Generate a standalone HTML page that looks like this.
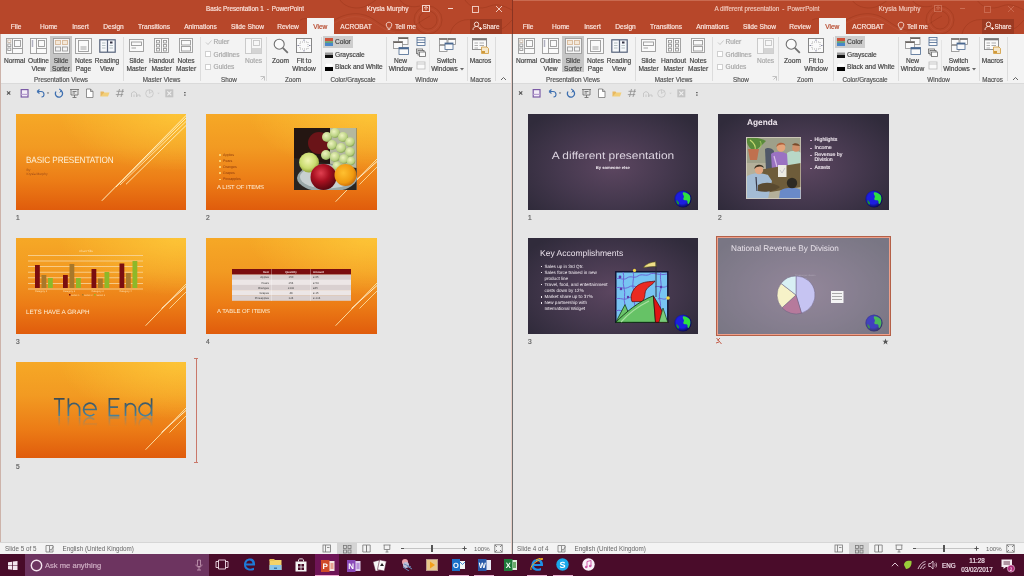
<!DOCTYPE html>
<html><head><meta charset="utf-8"><style>
html,body{margin:0;padding:0}
body{width:1024px;height:576px;position:relative;overflow:hidden;font-family:"Liberation Sans",sans-serif;background:#e6e6e6}
.a{position:absolute}
svg text{text-rendering:geometricPrecision}
.s .t{text-rendering:geometricPrecision}
.s .t{-webkit-text-stroke:0}
.t{position:absolute;white-space:nowrap;line-height:1.2;font-family:"Liberation Sans",sans-serif;-webkit-text-stroke:0.18px currentColor}
.win{position:absolute;top:0;width:512px;height:554px;overflow:hidden;will-change:transform}
</style></head><body>
<div class="win" style="left:0"><div class="a" style="left:0px;top:0px;width:512px;height:34px;background:#b7472a"></div><svg class="a" style="left:300px;top:0px;" width="212" height="34" viewBox="0 0 212 34"><g fill="none" stroke="rgba(140,45,20,0.35)" stroke-width="0.9"><path d="M20 34 C30 20 45 12 60 14 C75 16 80 28 95 30 C110 32 118 22 130 16"/><path d="M40 0 C45 8 58 10 66 6 C72 3 76 0 78 -2"/><circle cx="128" cy="20" r="9"/><circle cx="128" cy="20" r="14"/><path d="M150 34 C152 24 162 18 172 20 C182 22 186 30 196 30 C204 30 208 24 212 20"/><path d="M100 0 C104 6 112 8 120 6"/><path d="M165 0 C170 8 180 10 190 6 C198 3 204 6 212 10"/><path d="M0 20 C8 16 14 22 22 20"/></g><g fill="none" stroke="rgba(255,200,180,0.08)" stroke-width="0.8"><circle cx="128" cy="20" r="11.5"/><path d="M22 34 C32 22 46 15 60 17 C74 19 80 30 95 33"/></g></svg><div class="t" style="left:155px;width:200px;text-align:center;top:4.72px;font-size:6.3px;color:#fbe3dc;font-weight:normal;">Basic Presentation 1 &thinsp;-&thinsp; PowerPoint</div><div class="t" style="left:287.5px;width:200px;text-align:center;top:5.04px;font-size:6.6px;color:#fbe3dc;font-weight:normal;">Krysia Murphy</div><svg class="a" style="left:421px;top:4px;" width="10" height="9" viewBox="0 0 10 9"><rect x="1.5" y="1.5" width="7" height="6" fill="none" stroke="#f5d5cc" stroke-width="1"/><path d="M3 4 L5 2.5 L7 4 M5 3 V6" stroke="#f5d5cc" fill="none" stroke-width="0.9"/></svg><div class="a" style="left:448px;top:8px;width:5px;height:1px;background:#f5d5cc"></div><svg class="a" style="left:471px;top:5px;" width="8" height="8" viewBox="0 0 8 8"><rect x="1.5" y="1.5" width="6" height="6" fill="none" stroke="#f5d5cc" stroke-width="0.9"/></svg><svg class="a" style="left:495px;top:5px;" width="8" height="8" viewBox="0 0 8 8"><path d="M1 1 L7 7 M7 1 L1 7" stroke="#f5d5cc" stroke-width="0.9"/></svg><div class="t" style="left:-84px;width:200px;text-align:center;top:22.84px;font-size:6.6px;color:#fbe6df;font-weight:normal;">File</div><div class="t" style="left:-51.25px;width:200px;text-align:center;top:22.84px;font-size:6.6px;color:#fbe6df;font-weight:normal;">Home</div><div class="t" style="left:-19.5px;width:200px;text-align:center;top:22.84px;font-size:6.6px;color:#fbe6df;font-weight:normal;">Insert</div><div class="t" style="left:13.5px;width:200px;text-align:center;top:22.84px;font-size:6.6px;color:#fbe6df;font-weight:normal;">Design</div><div class="t" style="left:54px;width:200px;text-align:center;top:22.84px;font-size:6.6px;color:#fbe6df;font-weight:normal;">Transitions</div><div class="t" style="left:100.5px;width:200px;text-align:center;top:22.84px;font-size:6.6px;color:#fbe6df;font-weight:normal;">Animations</div><div class="t" style="left:147.5px;width:200px;text-align:center;top:22.84px;font-size:6.6px;color:#fbe6df;font-weight:normal;">Slide Show</div><div class="t" style="left:188px;width:200px;text-align:center;top:22.84px;font-size:6.6px;color:#fbe6df;font-weight:normal;">Review</div><div class="t" style="left:256px;width:200px;text-align:center;top:22.84px;font-size:6.6px;color:#fbe6df;font-weight:normal;">ACROBAT</div><div class="a" style="left:306.5px;top:18px;width:27.5px;height:16px;background:#f3f3f3"></div><div class="t" style="left:220.25px;width:200px;text-align:center;top:22.84px;font-size:6.6px;color:#b7472a;font-weight:normal;">View</div><svg class="a" style="left:385px;top:21px;" width="8" height="10" viewBox="0 0 8 10"><path d="M4 1.2 C2 1.2 1.2 2.6 1.2 4 C1.2 5.3 2.4 6 2.6 7.2 H5.4 C5.6 6 6.8 5.3 6.8 4 C6.8 2.6 6 1.2 4 1.2 Z M2.8 8.4 H5.2" fill="none" stroke="#fbe6df" stroke-width="0.8"/></svg><div class="t" style="left:395px;top:22.84px;font-size:6.6px;color:#fbe6df;font-weight:normal;">Tell me</div><div class="a" style="left:470px;top:18.5px;width:32px;height:15px;background:#9c3a22"></div><svg class="a" style="left:472px;top:21px;" width="10" height="10" viewBox="0 0 10 10"><circle cx="4.5" cy="3.3" r="2.2" fill="none" stroke="#fbe6df" stroke-width="0.9"/><path d="M1 9 C1 6.5 2.5 5.5 4.5 5.5 C6 5.5 7 6 7.5 7 M7 7.5 H10 M8.5 6 V9" fill="none" stroke="#fbe6df" stroke-width="0.9"/></svg><div class="t" style="left:482.5px;top:22.66px;font-size:6.4px;color:#fbe6df;font-weight:normal;">Share</div><div class="a" style="left:0px;top:34px;width:512px;height:49px;background:#f3f3f3"></div><div class="a" style="left:0px;top:83px;width:512px;height:1px;background:#dadada"></div><div class="a" style="left:0px;top:84px;width:512px;height:458px;background:#e6e6e6"></div><div class="a" style="left:428.5px;top:40px;width:1px;height:32px;background:#e4e4e4"></div><div class="a" style="left:122.5px;top:37px;width:1px;height:44px;background:#dcdcdc"></div><div class="a" style="left:200px;top:37px;width:1px;height:44px;background:#dcdcdc"></div><div class="a" style="left:266px;top:37px;width:1px;height:44px;background:#dcdcdc"></div><div class="a" style="left:320.5px;top:37px;width:1px;height:44px;background:#dcdcdc"></div><div class="a" style="left:385.5px;top:37px;width:1px;height:44px;background:#dcdcdc"></div><div class="a" style="left:466.5px;top:37px;width:1px;height:44px;background:#dcdcdc"></div><div class="a" style="left:494.5px;top:37px;width:1px;height:44px;background:#dcdcdc"></div><div class="a" style="left:50px;top:36px;width:22px;height:36px;background:#c6c6c6"></div><svg class="a" style="left:6px;top:38px;" width="17" height="16" viewBox="0 0 17 16"><g fill="none" stroke="#9a9a9a" stroke-width="0.9"><rect x="0.5" y="0.5" width="16" height="15" fill="#fafafa"/><path d="M6.5 0.5 V15.5 M6.5 10.5 H16.5"/><rect x="8.5" y="2.5" width="6" height="6"/><rect x="1.8" y="2" width="3" height="2.5" stroke="#c8b8a8"/><rect x="1.8" y="6" width="3" height="2.5"/><rect x="1.8" y="10" width="3" height="2.5"/></g></svg><div class="t" style="left:-85.5px;width:200px;text-align:center;top:56.54px;font-size:6.6px;color:#444;font-weight:normal;">Normal</div><svg class="a" style="left:30px;top:38px;" width="17" height="16" viewBox="0 0 17 16"><g fill="none" stroke="#9a9a9a" stroke-width="0.9"><rect x="0.5" y="0.5" width="16" height="15" fill="#fafafa"/><path d="M6.5 0.5 V15.5 M6.5 10.5 H16.5"/><rect x="8.5" y="2.5" width="6" height="6"/><path d="M2.5 2 V9" stroke="#b0b0c0" stroke-width="1.5"/></g></svg><div class="t" style="left:-61.5px;width:200px;text-align:center;top:56.54px;font-size:6.6px;color:#444;font-weight:normal;">Outline</div><div class="t" style="left:-61.5px;width:200px;text-align:center;top:65.24px;font-size:6.6px;color:#444;font-weight:normal;">View</div><svg class="a" style="left:52.5px;top:38px;" width="17" height="16" viewBox="0 0 17 16"><g fill="none" stroke="#9a9a9a" stroke-width="0.9"><rect x="0.5" y="0.5" width="16" height="15" fill="#f4f4f4"/><rect x="2.5" y="2.5" width="5" height="4" stroke="#d8b898" fill="#f4e8d8"/><rect x="9.5" y="2.5" width="5" height="4" stroke="#d8b898" fill="#f4e8d8"/><rect x="2.5" y="9" width="5" height="4"/><rect x="9.5" y="9" width="5" height="4"/></g></svg><div class="t" style="left:-39px;width:200px;text-align:center;top:56.54px;font-size:6.6px;color:#444;font-weight:normal;">Slide</div><div class="t" style="left:-39px;width:200px;text-align:center;top:65.24px;font-size:6.6px;color:#444;font-weight:normal;">Sorter</div><svg class="a" style="left:75px;top:38px;" width="17" height="16" viewBox="0 0 17 16"><g fill="none" stroke="#9a9a9a" stroke-width="0.9"><rect x="0.5" y="0.5" width="16" height="15" fill="#fafafa"/><rect x="3.5" y="2.5" width="10" height="11"/><path d="M5.5 9 H11.5 M5.5 11 H11.5"/></g></svg><div class="t" style="left:-16.5px;width:200px;text-align:center;top:56.54px;font-size:6.6px;color:#444;font-weight:normal;">Notes</div><div class="t" style="left:-16.5px;width:200px;text-align:center;top:65.24px;font-size:6.6px;color:#444;font-weight:normal;">Page</div><svg class="a" style="left:98.5px;top:39px;" width="17" height="14" viewBox="0 0 17 14"><g fill="none" stroke="#55627a" stroke-width="1.2"><rect x="0.8" y="0.8" width="15.4" height="12.4" fill="#f6f8fb"/><path d="M8.5 1 V13"/><path d="M3 4 H6.5 M3 6.5 H6.5 M3 9 H6.5 M10.5 6.5 H14 M10.5 9 H14" stroke="#9aa" stroke-width="0.7"/><rect x="11" y="2.5" width="2.5" height="2" fill="#334" stroke="none"/></g></svg><div class="t" style="left:7px;width:200px;text-align:center;top:56.54px;font-size:6.6px;color:#444;font-weight:normal;">Reading</div><div class="t" style="left:7px;width:200px;text-align:center;top:65.24px;font-size:6.6px;color:#444;font-weight:normal;">View</div><div class="t" style="left:-39px;width:200px;text-align:center;top:75.72px;font-size:6.3px;color:#555;font-weight:normal;">Presentation Views</div><svg class="a" style="left:129px;top:39px;" width="15" height="13" viewBox="0 0 15 13"><g fill="none" stroke="#9a9a9a" stroke-width="0.9"><rect x="0.5" y="0.5" width="14" height="12" fill="#fafafa"/><rect x="2.5" y="3" width="10" height="3.5"/><path d="M2.5 9 H7"/></g></svg><div class="t" style="left:36.5px;width:200px;text-align:center;top:56.54px;font-size:6.6px;color:#444;font-weight:normal;">Slide</div><div class="t" style="left:36.5px;width:200px;text-align:center;top:65.24px;font-size:6.6px;color:#444;font-weight:normal;">Master</div><svg class="a" style="left:154px;top:38px;" width="15" height="15" viewBox="0 0 15 15"><g fill="none" stroke="#9a9a9a" stroke-width="0.9"><rect x="0.5" y="0.5" width="14" height="14" fill="#fafafa"/><path d="M7.5 0.5 V14.5"/><rect x="2.5" y="2.5" width="3" height="2.5"/><rect x="2.5" y="6.5" width="3" height="2.5"/><rect x="2.5" y="10.5" width="3" height="2.5"/><rect x="9.5" y="2.5" width="3" height="2.5"/><rect x="9.5" y="6.5" width="3" height="2.5"/><rect x="9.5" y="10.5" width="3" height="2.5"/></g></svg><div class="t" style="left:61.5px;width:200px;text-align:center;top:56.54px;font-size:6.6px;color:#444;font-weight:normal;">Handout</div><div class="t" style="left:61.5px;width:200px;text-align:center;top:65.24px;font-size:6.6px;color:#444;font-weight:normal;">Master</div><svg class="a" style="left:179px;top:38px;" width="14" height="15" viewBox="0 0 14 15"><g fill="none" stroke="#9a9a9a" stroke-width="0.9"><rect x="0.5" y="0.5" width="13" height="14" fill="#fafafa"/><rect x="2.5" y="2.5" width="9" height="4.5"/><rect x="2.5" y="8.5" width="9" height="4.5"/></g></svg><div class="t" style="left:86px;width:200px;text-align:center;top:56.54px;font-size:6.6px;color:#444;font-weight:normal;">Notes</div><div class="t" style="left:86px;width:200px;text-align:center;top:65.24px;font-size:6.6px;color:#444;font-weight:normal;">Master</div><div class="t" style="left:61.5px;width:200px;text-align:center;top:75.72px;font-size:6.3px;color:#555;font-weight:normal;">Master Views</div><svg class="a" style="left:205px;top:39px;" width="7" height="7" viewBox="0 0 7 7"><path d="M1 3.5 L3 5.5 L6.5 1.5" fill="none" stroke="#c4c4c4" stroke-width="0.9"/></svg><div class="t" style="left:213.5px;top:38.34px;font-size:6.6px;color:#a8a8a8;font-weight:normal;">Ruler</div><div class="a" style="left:205px;top:51px;width:6px;height:6px;background:#fff;border:0.5px solid #d0d0d0;box-sizing:border-box"></div><div class="t" style="left:213.5px;top:50.54px;font-size:6.6px;color:#a8a8a8;font-weight:normal;">Gridlines</div><div class="a" style="left:205px;top:63.5px;width:6px;height:6px;background:#fff;border:0.5px solid #d0d0d0;box-sizing:border-box"></div><div class="t" style="left:213.5px;top:63.04px;font-size:6.6px;color:#a8a8a8;font-weight:normal;">Guides</div><svg class="a" style="left:245px;top:38px;" width="17" height="16" viewBox="0 0 17 16"><g fill="none" stroke="#c6c6c6" stroke-width="0.9"><rect x="0.5" y="0.5" width="16" height="15" fill="#f7f7f7"/><path d="M6.5 0.5 V15.5"/><rect x="8.5" y="2.5" width="6" height="5"/><rect x="7" y="10" width="9.5" height="5.5" fill="#d4d4d4" stroke="none"/></g></svg><div class="t" style="left:153.5px;width:200px;text-align:center;top:56.54px;font-size:6.6px;color:#a8a8a8;font-weight:normal;">Notes</div><div class="t" style="left:129px;width:200px;text-align:center;top:75.72px;font-size:6.3px;color:#555;font-weight:normal;">Show</div><svg class="a" style="left:260px;top:76px;" width="5" height="5" viewBox="0 0 5 5"><path d="M0.5 0.5 H4.5 V4.5 M1.5 3.5 L4 1" fill="none" stroke="#aaa" stroke-width="0.7"/></svg><svg class="a" style="left:272.5px;top:38px;" width="16" height="16" viewBox="0 0 16 16"><circle cx="6.2" cy="6.2" r="5" fill="#fafafa" stroke="#707070" stroke-width="1.1"/><path d="M9.8 9.8 L14.8 14.8" stroke="#707070" stroke-width="1.8"/></svg><div class="t" style="left:180.5px;width:200px;text-align:center;top:56.54px;font-size:6.6px;color:#444;font-weight:normal;">Zoom</div><svg class="a" style="left:296px;top:38px;" width="16" height="15" viewBox="0 0 16 15"><g fill="none" stroke="#7a7a7a" stroke-width="0.9"><rect x="0.5" y="0.5" width="15" height="14" fill="#fafafa"/><rect x="4" y="4" width="8" height="7" stroke="#aaa" stroke-dasharray="1 1"/><path d="M8 1.5 V3 M8 12 V13.5 M1.5 7.5 H3 M13 7.5 H14.5" stroke="#7a7a9a"/></g></svg><div class="t" style="left:204px;width:200px;text-align:center;top:56.54px;font-size:6.6px;color:#444;font-weight:normal;">Fit to</div><div class="t" style="left:204px;width:200px;text-align:center;top:65.24px;font-size:6.6px;color:#444;font-weight:normal;">Window</div><div class="t" style="left:193px;width:200px;text-align:center;top:75.72px;font-size:6.3px;color:#555;font-weight:normal;">Zoom</div><div class="a" style="left:323px;top:36px;width:30px;height:11.5px;background:#cdcdcd"></div><svg class="a" style="left:325px;top:37.5px;" width="8" height="8" viewBox="0 0 8 8"><rect x="0" y="0" width="8" height="3.3" fill="#d0523a"/><rect x="0" y="3.3" width="8" height="1.6" fill="#5aa36a"/><rect x="0" y="4.9" width="8" height="3.1" fill="#4a86c8"/></svg><div class="t" style="left:335px;top:37.54px;font-size:6.6px;color:#444;font-weight:normal;">Color</div><svg class="a" style="left:325px;top:50px;" width="8" height="8" viewBox="0 0 8 8"><rect x="0" y="0" width="8" height="2.5" fill="#f0f0f0"/><rect x="0" y="2.5" width="8" height="2.5" fill="#999"/><rect x="0" y="5" width="8" height="3" fill="#111"/></svg><div class="t" style="left:335px;top:50.54px;font-size:6.6px;color:#444;font-weight:normal;">Grayscale</div><svg class="a" style="left:325px;top:63px;" width="8" height="8" viewBox="0 0 8 8"><rect x="0" y="0" width="8" height="4" fill="#fff" stroke="#ddd" stroke-width="0.5"/><rect x="0" y="4" width="8" height="4" fill="#000"/></svg><div class="t" style="left:335px;top:63.04px;font-size:6.6px;color:#444;font-weight:normal;">Black and White</div><div class="t" style="left:253px;width:200px;text-align:center;top:75.72px;font-size:6.3px;color:#555;font-weight:normal;">Color/Grayscale</div><svg class="a" style="left:393px;top:37px;" width="16" height="18" viewBox="0 0 16 18"><g stroke-width="0.8"><rect x="5.5" y="0.5" width="9.5" height="7" fill="#fafafa" stroke="#8a8a8a"/><rect x="5.5" y="0.5" width="9.5" height="1.5" fill="#6a6460"/><rect x="0.5" y="4.5" width="9" height="7" fill="#fafafa" stroke="#8a8a8a"/><rect x="0.5" y="4.5" width="9" height="1.5" fill="#6a6460"/><rect x="6" y="10.5" width="9.5" height="7" fill="#fafafa" stroke="#4a6890"/><rect x="6" y="10.5" width="9.5" height="1.8" fill="#4a6890"/></g></svg><div class="t" style="left:300.5px;width:200px;text-align:center;top:56.54px;font-size:6.6px;color:#444;font-weight:normal;">New</div><div class="t" style="left:300.5px;width:200px;text-align:center;top:65.24px;font-size:6.6px;color:#444;font-weight:normal;">Window</div><svg class="a" style="left:415.5px;top:37px;" width="10" height="34" viewBox="0 0 10 34"><g stroke-width="0.8" fill="#fafafa"><rect x="1" y="0.5" width="8" height="8" stroke="#4a6890"/><path d="M1 3 H9 M1 5.5 H9" stroke="#4a6890"/><rect x="0.5" y="12" width="6" height="4.5" stroke="#666"/><rect x="2" y="13.5" width="6" height="4.5" stroke="#666"/><rect x="3.5" y="15" width="6" height="4.5" stroke="#666"/><rect x="1" y="25" width="8" height="7" stroke="#bbb"/><path d="M1 27 H9" stroke="#bbb"/></g></svg><svg class="a" style="left:438.5px;top:38px;" width="17" height="14" viewBox="0 0 17 14"><g stroke-width="0.8"><rect x="0.5" y="0.5" width="7.5" height="6" fill="#fafafa" stroke="#8a8a8a"/><rect x="0.5" y="0.5" width="7.5" height="1.3" fill="#6a6460"/><rect x="9" y="0.5" width="7.5" height="6" fill="#fafafa" stroke="#8a8a8a"/><rect x="9" y="0.5" width="7.5" height="1.3" fill="#6a6460"/><rect x="0.5" y="7.5" width="7.5" height="6" fill="#fafafa" stroke="#8a8a8a"/><rect x="6" y="5" width="8" height="6.5" fill="#fafafa" stroke="#4a6890"/><rect x="6" y="5" width="8" height="1.5" fill="#4a6890"/></g></svg><div class="t" style="left:346.5px;width:200px;text-align:center;top:56.54px;font-size:6.6px;color:#444;font-weight:normal;">Switch</div><div class="t" style="left:344.5px;width:200px;text-align:center;top:65.24px;font-size:6.6px;color:#444;font-weight:normal;">Windows</div><svg class="a" style="left:459.5px;top:68px;" width="4" height="3" viewBox="0 0 4 3"><path d="M0 0 H4 L2 2.5 Z" fill="#666"/></svg><div class="t" style="left:326.5px;width:200px;text-align:center;top:75.72px;font-size:6.3px;color:#555;font-weight:normal;">Window</div><svg class="a" style="left:472px;top:38px;" width="18" height="16" viewBox="0 0 18 16"><g stroke-width="0.8"><rect x="0.5" y="0.5" width="14" height="11" fill="#fafafa" stroke="#777"/><rect x="0.5" y="0.5" width="14" height="1.8" fill="#777"/><path d="M2.5 5 H6 M7.5 5 H12 M2.5 7.5 H6 M7.5 7.5 H12 M2.5 10 H6" stroke="#999"/><path d="M9.5 9 H15 L16.5 10.5 V15.5 H9.5 Z" fill="#f5e6c8" stroke="#d09a3a"/><rect x="10" y="13" width="3" height="2" fill="#d09a3a"/></g></svg><div class="t" style="left:380.5px;width:200px;text-align:center;top:56.54px;font-size:6.6px;color:#444;font-weight:normal;">Macros</div><div class="t" style="left:380.5px;width:200px;text-align:center;top:75.72px;font-size:6.3px;color:#555;font-weight:normal;">Macros</div><svg class="a" style="left:500px;top:76px;" width="7" height="5" viewBox="0 0 7 5"><path d="M1 4 L3.5 1.5 L6 4" fill="none" stroke="#555" stroke-width="0.9"/></svg><svg class="a" style="left:0px;top:0px;pointer-events:none" width="512" height="110" viewBox="0 0 512 110"><path d="M7 91.3 L10.3 94.6 M10.3 91.3 L7 94.6" stroke="#555" stroke-width="1.1"/><rect x="21.2" y="89.6" width="6.8" height="7.4" fill="#f4eef8" stroke="#7b5aa6" stroke-width="1.2"/><rect x="21.2" y="93.8" width="6.8" height="1.2" fill="#b8a0d0"/><path d="M37 91.5 L39.5 89.5 M37 91.5 L39.5 93.5 M37.3 91.5 H41 C43 91.5 44 93 44 94.5 C44 96 43 97 41.5 97" fill="none" stroke="#3d6fb0" stroke-width="1.1"/><path d="M46.8 92.6 L49.2 92.6 L48 94.1 Z" fill="#666"/><path d="M60.5 90.3 A3.6 3.6 0 1 1 56 91.5" fill="none" stroke="#3d6fb0" stroke-width="1.3"/><path d="M59 89 L61.5 90.3 L59.8 92.5" fill="none" stroke="#3d6fb0" stroke-width="1"/><path d="M70 89.5 H79 M71 89.5 V95 H78 V89.5 M74.5 95 V97.5 M72.5 97.5 H76.5 M72.5 91.5 H76.5 M72.5 93 H75" fill="none" stroke="#666" stroke-width="0.8"/><path d="M86.5 89 H90.5 L93 91.5 V97.5 H86.5 Z M90.5 89 V91.5 H93" fill="#fff" stroke="#777" stroke-width="0.8"/><path d="M100.5 96.5 L102 92.5 H109.5 L108 96.5 Z" fill="#f2cf7a"/><path d="M100.5 96.5 V91.5 H103.5 L104.3 92.5" fill="#e8b860"/><path d="M119.5 89 L117.5 97 M123 89 L121 97 M116.5 91.3 H124 M115.8 94.6 H123.2" stroke="#8e8e8e" stroke-width="0.8"/><path d="M131.5 97 V93 L134 91.5 L136.5 93 V97 M134 97 V94.5 M137 97 V95 H140 V97" fill="none" stroke="#c0c0c0" stroke-width="0.8"/><circle cx="149.5" cy="93.5" r="3.8" fill="none" stroke="#c8c8c8" stroke-width="0.9"/><path d="M149.5 93.5 L153 91 M149.5 93.5 V89.5" stroke="#c8c8c8" stroke-width="0.8"/><path d="M157.3 92.8 L159.7 92.8 L158.5 94.3 Z" fill="#d0d0d0"/><rect x="165.3" y="89.3" width="8" height="8" fill="#c4c4c4"/><path d="M167.3 91.3 L171.3 95.3 M171.3 91.3 L167.3 95.3" stroke="#f0f0f0" stroke-width="1.1"/><rect x="184.3" y="92" width="1.2" height="1.2" fill="#333"/><rect x="184.3" y="94.5" width="1.2" height="1.2" fill="#333"/></svg><div class="a" style="left:0px;top:542px;width:512px;height:12px;background:#f3f3f3;border-top:1px solid #d6d6d6;box-sizing:border-box"></div><div class="t" style="left:5px;top:544.52px;font-size:6.3px;color:#666;font-weight:normal;-webkit-text-stroke:0">Slide 5 of 5</div><svg class="a" style="left:45px;top:544px;" width="9" height="9" viewBox="0 0 9 9"><path d="M1 1.5 H4.5 V8 H1 Z M4.5 1.5 H8 V8 H4.5" fill="none" stroke="#777" stroke-width="0.8"/><path d="M5 5 L6 6.5 L8.5 2.5" fill="none" stroke="#777" stroke-width="0.8"/></svg><div class="t" style="left:62.5px;top:544.52px;font-size:6.3px;color:#666;font-weight:normal;-webkit-text-stroke:0">English (United Kingdom)</div><svg class="a" style="left:321.5px;top:544px;" width="10" height="9" viewBox="0 0 10 9"><rect x="1" y="1" width="7.5" height="7" fill="none" stroke="#777" stroke-width="0.8"/><path d="M3.5 1 V8 M5 3.5 H7.5" stroke="#777" stroke-width="0.8"/></svg><div class="a" style="left:337px;top:543px;width:19.5px;height:11px;background:#d4d4d4"></div><svg class="a" style="left:342.5px;top:544.5px;" width="9" height="9" viewBox="0 0 9 9"><g fill="none" stroke="#777" stroke-width="0.8"><rect x="0.5" y="0.5" width="3" height="3"/><rect x="5" y="0.5" width="3" height="3"/><rect x="0.5" y="5" width="3" height="3"/><rect x="5" y="5" width="3" height="3"/></g></svg><svg class="a" style="left:362px;top:544px;" width="9" height="9" viewBox="0 0 9 9"><path d="M0.8 1 H4.5 V8 H0.8 Z M4.5 1 H8.2 V8 H4.5 Z" fill="none" stroke="#777" stroke-width="0.8"/></svg><svg class="a" style="left:383px;top:544px;" width="8" height="9" viewBox="0 0 8 9"><path d="M0.5 1 H7.5 M1.2 1 V5.5 H6.8 V1 M4 5.5 V8 M2.5 8 H5.5" fill="none" stroke="#777" stroke-width="0.8"/></svg><div class="a" style="left:400.5px;top:548px;width:3px;height:1px;background:#555"></div><div class="a" style="left:404px;top:548px;width:57.5px;height:1px;background:#c4c4c4"></div><div class="a" style="left:430.5px;top:545px;width:2px;height:7px;background:#555"></div><svg class="a" style="left:461px;top:545px;" width="7" height="7" viewBox="0 0 7 7"><path d="M3.5 1.3 V5.7 M1.3 3.5 H5.7" stroke="#555" stroke-width="1"/></svg><div class="t" style="left:474px;top:544.64px;font-size:6.1px;color:#666;font-weight:normal;-webkit-text-stroke:0">100%</div><svg class="a" style="left:494px;top:544px;" width="9" height="9" viewBox="0 0 9 9"><rect x="0.8" y="0.8" width="7.4" height="7.4" fill="none" stroke="#777" stroke-width="0.8"/><path d="M1 1 L3 3 M8 1 L6 3 M1 8 L3 6 M8 8 L6 6" stroke="#777" stroke-width="0.9"/></svg><div class="a s" style="left:15.5px;top:113.5px;width:170.5px;height:96.5px;background:radial-gradient(ellipse 70% 60% at 95% 0%, rgba(255,205,60,0.75), rgba(255,205,60,0) 100%),linear-gradient(to bottom,#f6a826 0%,#f29a22 35%,#ec7c16 70%,#e05c0c 100%);overflow:hidden"><svg class="a" style="left:0;top:0" width="170.5" height="96.5"><g stroke="#fff0c0" stroke-width="0.7" fill="none"><path d="M85.8 86.8 L171 0.5" stroke-width="1"/><path d="M100 73 L171 3" stroke-width="0.9"/><path d="M104 71 L171 6.5" stroke-width="0.8"/><path d="M110 70.3 L171 10.5" stroke-width="0.9"/></g></svg><div class="t" style="left:10.8px;top:41.14px;font-size:9.1px;color:#fdf0d8;font-weight:normal;letter-spacing:-0.1px;transform:scaleX(0.9);transform-origin:0 50%">BASIC PRESENTATION</div><div class="t" style="left:11px;top:55.32px;font-size:3.3px;color:#9a4a18;font-weight:normal;">By</div><div class="t" style="left:11px;top:59.32px;font-size:3.3px;color:#9a4a18;font-weight:normal;">Krysia Murphy</div></div><div class="t" style="left:16px;top:213.64px;font-size:6.6px;color:#606060;font-weight:normal;">1</div><div class="a s" style="left:206px;top:113.5px;width:170.5px;height:96.5px;background:radial-gradient(ellipse 70% 60% at 95% 0%, rgba(255,205,60,0.75), rgba(255,205,60,0) 100%),linear-gradient(to bottom,#f6a826 0%,#f29a22 35%,#ec7c16 70%,#e05c0c 100%);overflow:hidden"><svg class="a" style="left:0;top:0" width="170.5" height="96.5"><g stroke="#fde9b0" stroke-width="0.7" fill="none"><path d="M129.6 87.7 L171 45" stroke-width="0.9"/><path d="M145.5 70.5 L171 47.5" stroke="#fff6dc" stroke-width="0.9"/><path d="M153.5 70.5 L171 53" stroke-width="0.8"/></g></svg><svg class="a" style="left:88.25px;top:14.1px" width="62.5" height="62.5" viewBox="0 0 62.5 62.5"><defs><radialGradient id="ra" cx="0.4" cy="0.35" r="0.65"><stop offset="0" stop-color="#e04050"/><stop offset="0.5" stop-color="#a81020"/><stop offset="1" stop-color="#5a0810"/></radialGradient><radialGradient id="og" cx="0.4" cy="0.4" r="0.65"><stop offset="0" stop-color="#ffc030"/><stop offset="0.7" stop-color="#f09a10"/><stop offset="1" stop-color="#c86a08"/></radialGradient><radialGradient id="ya" cx="0.45" cy="0.4" r="0.65"><stop offset="0" stop-color="#f0f4b0"/><stop offset="0.6" stop-color="#cadc70"/><stop offset="1" stop-color="#8a9a30"/></radialGradient><radialGradient id="gr" cx="0.4" cy="0.35" r="0.7"><stop offset="0" stop-color="#eef4c0"/><stop offset="0.7" stop-color="#b8d080"/><stop offset="1" stop-color="#7a9a48"/></radialGradient></defs><rect width="62.5" height="62.5" fill="#241612"/><rect x="36" y="0" width="26.5" height="62.5" fill="#b4b8a0"/><path d="M0 30 L0 62.5 H62.5 V40 Z" fill="#2a2420"/><ellipse cx="33" cy="50" rx="30" ry="14" fill="#9aa8a8"/><ellipse cx="33" cy="49" rx="27" ry="11.5" fill="#c8d0d0"/><circle cx="25" cy="15" r="11" fill="#6a1418"/><g fill="url(#gr)"><circle cx="33" cy="9" r="5"/><circle cx="41" cy="5" r="5"/><circle cx="49" cy="9" r="5"/><circle cx="56" cy="14" r="4.8"/><circle cx="38" cy="17" r="5"/><circle cx="47" cy="20" r="5"/><circle cx="56" cy="24" r="4.8"/><circle cx="32" cy="27" r="5"/><circle cx="41" cy="29" r="5"/><circle cx="50" cy="31" r="4.8"/><circle cx="57" cy="33" r="4.3"/><circle cx="43" cy="38" r="4.5"/></g><circle cx="15" cy="34.5" r="10" fill="url(#ya)"/><circle cx="29.5" cy="49" r="13" fill="url(#ra)"/><circle cx="51.5" cy="47" r="11" fill="url(#og)"/></svg><div class="a" style="left:13.3px;top:40.75px;width:1.5px;height:1.5px;background:#fbd070"></div><div class="t" style="left:17px;top:39.34px;font-size:3.6px;color:#8e3c0e;font-weight:normal;">Apples</div><div class="a" style="left:13.3px;top:46.85px;width:1.5px;height:1.5px;background:#fbd070"></div><div class="t" style="left:17px;top:45.44px;font-size:3.6px;color:#8e3c0e;font-weight:normal;">Pears</div><div class="a" style="left:13.3px;top:52.95px;width:1.5px;height:1.5px;background:#fbd070"></div><div class="t" style="left:17px;top:51.54px;font-size:3.6px;color:#8e3c0e;font-weight:normal;">Oranges</div><div class="a" style="left:13.3px;top:58.75px;width:1.5px;height:1.5px;background:#fbd070"></div><div class="t" style="left:17px;top:57.34px;font-size:3.6px;color:#8e3c0e;font-weight:normal;">Grapes</div><div class="a" style="left:13.3px;top:65.05px;width:1.5px;height:1.5px;background:#fbd070"></div><div class="t" style="left:17px;top:63.64px;font-size:3.6px;color:#8e3c0e;font-weight:normal;">Pineapples</div><div class="t" style="left:11px;top:71.76px;font-size:5.9px;color:#fdf0d8;font-weight:normal;">A LIST OF ITEMS</div></div><div class="t" style="left:206px;top:213.64px;font-size:6.6px;color:#606060;font-weight:normal;">2</div><div class="a s" style="left:15.5px;top:237.5px;width:170.5px;height:96.5px;background:radial-gradient(ellipse 70% 60% at 95% 0%, rgba(255,205,60,0.75), rgba(255,205,60,0) 100%),linear-gradient(to bottom,#f6a826 0%,#f29a22 35%,#ec7c16 70%,#e05c0c 100%);overflow:hidden"><svg class="a" style="left:0;top:0" width="170.5" height="96.5"><g stroke="#fde9b0" stroke-width="0.7" fill="none"><path d="M129.6 87.7 L171 45" stroke-width="0.9"/><path d="M145.5 70.5 L171 47.5" stroke="#fff6dc" stroke-width="0.9"/><path d="M153.5 70.5 L171 53" stroke-width="0.8"/></g></svg><svg class="a" style="left:0;top:0" width="171" height="97" viewBox="0 0 171 97"><rect x="12" y="17.0" width="115" height="0.8" fill="#f8d8a0"/><rect x="12" y="22.6" width="115" height="0.8" fill="#f8d8a0"/><rect x="12" y="28.2" width="115" height="0.8" fill="#f8d8a0"/><rect x="12" y="33.8" width="115" height="0.8" fill="#f8d8a0"/><rect x="12" y="39.4" width="115" height="0.8" fill="#f8d8a0"/><rect x="12" y="45.0" width="115" height="0.8" fill="#f8d8a0"/><rect x="12" y="50.6" width="115" height="0.8" fill="#f8d8a0"/><rect x="19.0" y="27" width="4.8" height="23" fill="#7a0e10"/><rect x="25.5" y="37" width="4.8" height="13" fill="#a8782a"/><rect x="32.0" y="40" width="4.8" height="10" fill="#8db82a"/><rect x="47.0" y="37" width="4.8" height="13" fill="#7a0e10"/><rect x="53.5" y="26" width="4.8" height="24" fill="#a8782a"/><rect x="60.0" y="40" width="4.8" height="10" fill="#8db82a"/><rect x="75.5" y="31" width="4.8" height="19" fill="#7a0e10"/><rect x="82.0" y="40.5" width="4.8" height="9.5" fill="#a8782a"/><rect x="88.5" y="34" width="4.8" height="16" fill="#8db82a"/><rect x="103.5" y="25.5" width="4.8" height="24.5" fill="#7a0e10"/><rect x="110.0" y="35" width="4.8" height="15" fill="#a8782a"/><rect x="116.5" y="23" width="4.8" height="27" fill="#8db82a"/><text x="70" y="14" font-size="3" fill="#fde0b0" text-anchor="middle" font-family="Liberation Sans">Chart Title</text><text x="25" y="54" font-size="2.5" fill="#fde0b0" text-anchor="middle" font-family="Liberation Sans">Category 1</text><text x="53" y="54" font-size="2.5" fill="#fde0b0" text-anchor="middle" font-family="Liberation Sans">Category 2</text><text x="81.5" y="54" font-size="2.5" fill="#fde0b0" text-anchor="middle" font-family="Liberation Sans">Category 3</text><text x="109.5" y="54" font-size="2.5" fill="#fde0b0" text-anchor="middle" font-family="Liberation Sans">Category 4</text><rect x="53" y="56" width="1.5" height="1.5" fill="#7a0e10"/><rect x="66" y="56" width="1.5" height="1.5" fill="#a8782a"/><rect x="78" y="56" width="1.5" height="1.5" fill="#8db82a"/><text x="55" y="57.6" font-size="2.3" fill="#fde0b0" font-family="Liberation Sans">Series 1</text><text x="68" y="57.6" font-size="2.3" fill="#fde0b0" font-family="Liberation Sans">Series 2</text><text x="80.5" y="57.6" font-size="2.3" fill="#fde0b0" font-family="Liberation Sans">Series 3</text></svg><div class="t" style="left:10.5px;top:71.72px;font-size:6.3px;color:#fdf0d8;font-weight:normal;">LETS HAVE A GRAPH</div></div><div class="t" style="left:16px;top:337.64px;font-size:6.6px;color:#606060;font-weight:normal;">3</div><div class="a s" style="left:206px;top:237.5px;width:170.5px;height:96.5px;background:radial-gradient(ellipse 70% 60% at 95% 0%, rgba(255,205,60,0.75), rgba(255,205,60,0) 100%),linear-gradient(to bottom,#f6a826 0%,#f29a22 35%,#ec7c16 70%,#e05c0c 100%);overflow:hidden"><svg class="a" style="left:0;top:0" width="170.5" height="96.5"><g stroke="#fde9b0" stroke-width="0.7" fill="none"><path d="M129.6 87.7 L171 45" stroke-width="0.9"/><path d="M145.5 70.5 L171 47.5" stroke="#fff6dc" stroke-width="0.9"/><path d="M153.5 70.5 L171 53" stroke-width="0.8"/></g></svg><svg class="a" style="left:26px;top:31px" width="119" height="32" viewBox="0 0 119 32"><rect x="0" y="0" width="119" height="5.8" fill="#7a0c0e"/><rect x="0" y="5.5" width="119" height="5.5" fill="#d9d0d0"/><rect x="0" y="10.7" width="119" height="5.5" fill="#ece6e6"/><rect x="0" y="15.9" width="119" height="5.5" fill="#d9d0d0"/><rect x="0" y="21.1" width="119" height="5.5" fill="#ece6e6"/><rect x="0" y="26.3" width="119" height="5.5" fill="#d9d0d0"/><rect x="39" y="0" width="0.5" height="32" fill="#fff" opacity="0.6"/><rect x="78.5" y="0" width="0.5" height="32" fill="#fff" opacity="0.6"/><g font-family="Liberation Sans" font-size="2.9" font-weight="bold" fill="#f4dede"><text x="37" y="4" text-anchor="end">Item</text><text x="59" y="4" text-anchor="middle">Quantity</text><text x="81" y="4">Amount</text></g><g font-family="Liberation Sans" font-size="2.9" fill="#444"><text x="37" y="9.3" text-anchor="end">Apples</text><text x="59" y="9.3" text-anchor="middle">150</text><text x="81" y="9.3">£ 65</text><text x="37" y="14.5" text-anchor="end">Pears</text><text x="59" y="14.5" text-anchor="middle">354</text><text x="81" y="14.5">£ 54</text><text x="37" y="19.7" text-anchor="end">Oranges</text><text x="59" y="19.7" text-anchor="middle">2343</text><text x="81" y="19.7">£45</text><text x="37" y="24.9" text-anchor="end">Grapes</text><text x="59" y="24.9" text-anchor="middle">48</text><text x="81" y="24.9">£ 35</text><text x="37" y="30.1" text-anchor="end">Pineapples</text><text x="59" y="30.1" text-anchor="middle">124</text><text x="81" y="30.1">£ 234</text></g></svg><div class="t" style="left:11px;top:71.96px;font-size:5.9px;color:#fdf0d8;font-weight:normal;">A TABLE OF ITEMS</div></div><div class="t" style="left:206px;top:337.64px;font-size:6.6px;color:#606060;font-weight:normal;">4</div><div class="a s" style="left:15.5px;top:361.5px;width:170.5px;height:96.5px;background:radial-gradient(ellipse 70% 60% at 95% 0%, rgba(255,205,60,0.75), rgba(255,205,60,0) 100%),linear-gradient(to bottom,#f6a826 0%,#f29a22 35%,#ec7c16 70%,#e05c0c 100%);overflow:hidden"><svg class="a" style="left:0;top:0" width="170.5" height="96.5"><g stroke="#fde9b0" stroke-width="0.7" fill="none"><path d="M129.6 87.7 L171 45" stroke-width="0.9"/><path d="M145.5 70.5 L171 47.5" stroke="#fff6dc" stroke-width="0.9"/><path d="M153.5 70.5 L171 53" stroke-width="0.8"/></g></svg><svg class="a" style="left:0;top:0" width="171" height="97" viewBox="0 0 171 97"><defs><linearGradient id="tg" gradientUnits="userSpaceOnUse" x1="0" y1="36" x2="0" y2="55"><stop offset="0" stop-color="#3c4a52"/><stop offset="1" stop-color="#4a86a0"/></linearGradient><linearGradient id="rg" gradientUnits="userSpaceOnUse" x1="0" y1="54.5" x2="0" y2="45"><stop offset="0" stop-color="#5a8aa0" stop-opacity="0.55"/><stop offset="1" stop-color="#5a8aa0" stop-opacity="0"/></linearGradient><filter id="bl" x="-10%" y="-50%" width="120%" height="200%"><feGaussianBlur stdDeviation="0.7"/></filter></defs><path d="M37.9 36.8 H48.6 M43.2 36.8 V54.3 M52.4 36.2 V54.3 M52.4 54.3 V47 A5.6 5.6 0 0 1 63.6 47 V54.3 M67.6 47.5 H80.2 A6.3 6.3 0 1 0 78.3 52 M103.4 36.8 H93.4 V53.6 H103.4 M93.4 45.2 H102 M109.5 41 V54.3 M109.5 54.3 V46.6 A5 5 0 0 1 119.5 46.6 V54.3 M135.6 36.2 V54.3 M123 47.5 A6.3 6.3 0 1 0 135.6 47.5 A6.3 6.3 0 1 0 123 47.5" fill="none" stroke="url(#tg)" stroke-width="1.7"/><g transform="translate(0,109.6) scale(1,-1)" filter="url(#bl)"><path d="M37.9 36.8 H48.6 M43.2 36.8 V54.3 M52.4 36.2 V54.3 M52.4 54.3 V47 A5.6 5.6 0 0 1 63.6 47 V54.3 M67.6 47.5 H80.2 A6.3 6.3 0 1 0 78.3 52 M103.4 36.8 H93.4 V53.6 H103.4 M93.4 45.2 H102 M109.5 41 V54.3 M109.5 54.3 V46.6 A5 5 0 0 1 119.5 46.6 V54.3 M135.6 36.2 V54.3 M123 47.5 A6.3 6.3 0 1 0 135.6 47.5 A6.3 6.3 0 1 0 123 47.5" fill="none" stroke="url(#rg)" stroke-width="1.7" transform="translate(0,0)"/></g></svg></div><div class="t" style="left:16px;top:462.64px;font-size:6.6px;color:#606060;font-weight:normal;">5</div><div class="a" style="left:195.5px;top:358px;width:1px;height:105px;background:#c9786a"></div><div class="a" style="left:194px;top:358px;width:4px;height:1px;background:#c9786a"></div><div class="a" style="left:194px;top:462px;width:4px;height:1px;background:#c9786a"></div></div>
<div class="win" style="left:512px"><div class="a" style="left:0px;top:0px;width:512px;height:34px;background:#b7472a"></div><svg class="a" style="left:300px;top:0px;" width="212" height="34" viewBox="0 0 212 34"><g fill="none" stroke="rgba(140,45,20,0.35)" stroke-width="0.9"><path d="M20 34 C30 20 45 12 60 14 C75 16 80 28 95 30 C110 32 118 22 130 16"/><path d="M40 0 C45 8 58 10 66 6 C72 3 76 0 78 -2"/><circle cx="128" cy="20" r="9"/><circle cx="128" cy="20" r="14"/><path d="M150 34 C152 24 162 18 172 20 C182 22 186 30 196 30 C204 30 208 24 212 20"/><path d="M100 0 C104 6 112 8 120 6"/><path d="M165 0 C170 8 180 10 190 6 C198 3 204 6 212 10"/><path d="M0 20 C8 16 14 22 22 20"/></g><g fill="none" stroke="rgba(255,200,180,0.08)" stroke-width="0.8"><circle cx="128" cy="20" r="11.5"/><path d="M22 34 C32 22 46 15 60 17 C74 19 80 30 95 33"/></g></svg><div class="t" style="left:155px;width:200px;text-align:center;top:4.72px;font-size:6.3px;color:#f0c8bc;font-weight:normal;">A different presentation &thinsp;-&thinsp; PowerPoint</div><div class="t" style="left:287.5px;width:200px;text-align:center;top:5.04px;font-size:6.6px;color:#f0c8bc;font-weight:normal;">Krysia Murphy</div><svg class="a" style="left:421px;top:4px;" width="10" height="9" viewBox="0 0 10 9"><rect x="1.5" y="1.5" width="7" height="6" fill="none" stroke="rgba(240,170,150,0.38)" stroke-width="1"/><path d="M3 4 L5 2.5 L7 4 M5 3 V6" stroke="rgba(240,170,150,0.38)" fill="none" stroke-width="0.9"/></svg><div class="a" style="left:448px;top:8px;width:5px;height:1px;background:rgba(240,170,150,0.38)"></div><svg class="a" style="left:471px;top:5px;" width="8" height="8" viewBox="0 0 8 8"><rect x="1.5" y="1.5" width="6" height="6" fill="none" stroke="rgba(240,170,150,0.38)" stroke-width="0.9"/></svg><svg class="a" style="left:495px;top:5px;" width="8" height="8" viewBox="0 0 8 8"><path d="M1 1 L7 7 M7 1 L1 7" stroke="rgba(240,170,150,0.38)" stroke-width="0.9"/></svg><div class="t" style="left:-84px;width:200px;text-align:center;top:22.84px;font-size:6.6px;color:#fbe6df;font-weight:normal;">File</div><div class="t" style="left:-51.25px;width:200px;text-align:center;top:22.84px;font-size:6.6px;color:#fbe6df;font-weight:normal;">Home</div><div class="t" style="left:-19.5px;width:200px;text-align:center;top:22.84px;font-size:6.6px;color:#fbe6df;font-weight:normal;">Insert</div><div class="t" style="left:13.5px;width:200px;text-align:center;top:22.84px;font-size:6.6px;color:#fbe6df;font-weight:normal;">Design</div><div class="t" style="left:54px;width:200px;text-align:center;top:22.84px;font-size:6.6px;color:#fbe6df;font-weight:normal;">Transitions</div><div class="t" style="left:100.5px;width:200px;text-align:center;top:22.84px;font-size:6.6px;color:#fbe6df;font-weight:normal;">Animations</div><div class="t" style="left:147.5px;width:200px;text-align:center;top:22.84px;font-size:6.6px;color:#fbe6df;font-weight:normal;">Slide Show</div><div class="t" style="left:188px;width:200px;text-align:center;top:22.84px;font-size:6.6px;color:#fbe6df;font-weight:normal;">Review</div><div class="t" style="left:256px;width:200px;text-align:center;top:22.84px;font-size:6.6px;color:#fbe6df;font-weight:normal;">ACROBAT</div><div class="a" style="left:306.5px;top:18px;width:27.5px;height:16px;background:#f3f3f3"></div><div class="t" style="left:220.25px;width:200px;text-align:center;top:22.84px;font-size:6.6px;color:#b7472a;font-weight:normal;">View</div><svg class="a" style="left:385px;top:21px;" width="8" height="10" viewBox="0 0 8 10"><path d="M4 1.2 C2 1.2 1.2 2.6 1.2 4 C1.2 5.3 2.4 6 2.6 7.2 H5.4 C5.6 6 6.8 5.3 6.8 4 C6.8 2.6 6 1.2 4 1.2 Z M2.8 8.4 H5.2" fill="none" stroke="#fbe6df" stroke-width="0.8"/></svg><div class="t" style="left:395px;top:22.84px;font-size:6.6px;color:#fbe6df;font-weight:normal;">Tell me</div><div class="a" style="left:470px;top:18.5px;width:32px;height:15px;background:#9c3a22"></div><svg class="a" style="left:472px;top:21px;" width="10" height="10" viewBox="0 0 10 10"><circle cx="4.5" cy="3.3" r="2.2" fill="none" stroke="#fbe6df" stroke-width="0.9"/><path d="M1 9 C1 6.5 2.5 5.5 4.5 5.5 C6 5.5 7 6 7.5 7 M7 7.5 H10 M8.5 6 V9" fill="none" stroke="#fbe6df" stroke-width="0.9"/></svg><div class="t" style="left:482.5px;top:22.66px;font-size:6.4px;color:#fbe6df;font-weight:normal;">Share</div><div class="a" style="left:0px;top:34px;width:512px;height:49px;background:#f3f3f3"></div><div class="a" style="left:0px;top:83px;width:512px;height:1px;background:#dadada"></div><div class="a" style="left:0px;top:84px;width:512px;height:458px;background:#e6e6e6"></div><div class="a" style="left:428.5px;top:40px;width:1px;height:32px;background:#e4e4e4"></div><div class="a" style="left:122.5px;top:37px;width:1px;height:44px;background:#dcdcdc"></div><div class="a" style="left:200px;top:37px;width:1px;height:44px;background:#dcdcdc"></div><div class="a" style="left:266px;top:37px;width:1px;height:44px;background:#dcdcdc"></div><div class="a" style="left:320.5px;top:37px;width:1px;height:44px;background:#dcdcdc"></div><div class="a" style="left:385.5px;top:37px;width:1px;height:44px;background:#dcdcdc"></div><div class="a" style="left:466.5px;top:37px;width:1px;height:44px;background:#dcdcdc"></div><div class="a" style="left:494.5px;top:37px;width:1px;height:44px;background:#dcdcdc"></div><div class="a" style="left:50px;top:36px;width:22px;height:36px;background:#c6c6c6"></div><svg class="a" style="left:6px;top:38px;" width="17" height="16" viewBox="0 0 17 16"><g fill="none" stroke="#9a9a9a" stroke-width="0.9"><rect x="0.5" y="0.5" width="16" height="15" fill="#fafafa"/><path d="M6.5 0.5 V15.5 M6.5 10.5 H16.5"/><rect x="8.5" y="2.5" width="6" height="6"/><rect x="1.8" y="2" width="3" height="2.5" stroke="#c8b8a8"/><rect x="1.8" y="6" width="3" height="2.5"/><rect x="1.8" y="10" width="3" height="2.5"/></g></svg><div class="t" style="left:-85.5px;width:200px;text-align:center;top:56.54px;font-size:6.6px;color:#444;font-weight:normal;">Normal</div><svg class="a" style="left:30px;top:38px;" width="17" height="16" viewBox="0 0 17 16"><g fill="none" stroke="#9a9a9a" stroke-width="0.9"><rect x="0.5" y="0.5" width="16" height="15" fill="#fafafa"/><path d="M6.5 0.5 V15.5 M6.5 10.5 H16.5"/><rect x="8.5" y="2.5" width="6" height="6"/><path d="M2.5 2 V9" stroke="#b0b0c0" stroke-width="1.5"/></g></svg><div class="t" style="left:-61.5px;width:200px;text-align:center;top:56.54px;font-size:6.6px;color:#444;font-weight:normal;">Outline</div><div class="t" style="left:-61.5px;width:200px;text-align:center;top:65.24px;font-size:6.6px;color:#444;font-weight:normal;">View</div><svg class="a" style="left:52.5px;top:38px;" width="17" height="16" viewBox="0 0 17 16"><g fill="none" stroke="#9a9a9a" stroke-width="0.9"><rect x="0.5" y="0.5" width="16" height="15" fill="#f4f4f4"/><rect x="2.5" y="2.5" width="5" height="4" stroke="#d8b898" fill="#f4e8d8"/><rect x="9.5" y="2.5" width="5" height="4" stroke="#d8b898" fill="#f4e8d8"/><rect x="2.5" y="9" width="5" height="4"/><rect x="9.5" y="9" width="5" height="4"/></g></svg><div class="t" style="left:-39px;width:200px;text-align:center;top:56.54px;font-size:6.6px;color:#444;font-weight:normal;">Slide</div><div class="t" style="left:-39px;width:200px;text-align:center;top:65.24px;font-size:6.6px;color:#444;font-weight:normal;">Sorter</div><svg class="a" style="left:75px;top:38px;" width="17" height="16" viewBox="0 0 17 16"><g fill="none" stroke="#9a9a9a" stroke-width="0.9"><rect x="0.5" y="0.5" width="16" height="15" fill="#fafafa"/><rect x="3.5" y="2.5" width="10" height="11"/><path d="M5.5 9 H11.5 M5.5 11 H11.5"/></g></svg><div class="t" style="left:-16.5px;width:200px;text-align:center;top:56.54px;font-size:6.6px;color:#444;font-weight:normal;">Notes</div><div class="t" style="left:-16.5px;width:200px;text-align:center;top:65.24px;font-size:6.6px;color:#444;font-weight:normal;">Page</div><svg class="a" style="left:98.5px;top:39px;" width="17" height="14" viewBox="0 0 17 14"><g fill="none" stroke="#55627a" stroke-width="1.2"><rect x="0.8" y="0.8" width="15.4" height="12.4" fill="#f6f8fb"/><path d="M8.5 1 V13"/><path d="M3 4 H6.5 M3 6.5 H6.5 M3 9 H6.5 M10.5 6.5 H14 M10.5 9 H14" stroke="#9aa" stroke-width="0.7"/><rect x="11" y="2.5" width="2.5" height="2" fill="#334" stroke="none"/></g></svg><div class="t" style="left:7px;width:200px;text-align:center;top:56.54px;font-size:6.6px;color:#444;font-weight:normal;">Reading</div><div class="t" style="left:7px;width:200px;text-align:center;top:65.24px;font-size:6.6px;color:#444;font-weight:normal;">View</div><div class="t" style="left:-39px;width:200px;text-align:center;top:75.72px;font-size:6.3px;color:#555;font-weight:normal;">Presentation Views</div><svg class="a" style="left:129px;top:39px;" width="15" height="13" viewBox="0 0 15 13"><g fill="none" stroke="#9a9a9a" stroke-width="0.9"><rect x="0.5" y="0.5" width="14" height="12" fill="#fafafa"/><rect x="2.5" y="3" width="10" height="3.5"/><path d="M2.5 9 H7"/></g></svg><div class="t" style="left:36.5px;width:200px;text-align:center;top:56.54px;font-size:6.6px;color:#444;font-weight:normal;">Slide</div><div class="t" style="left:36.5px;width:200px;text-align:center;top:65.24px;font-size:6.6px;color:#444;font-weight:normal;">Master</div><svg class="a" style="left:154px;top:38px;" width="15" height="15" viewBox="0 0 15 15"><g fill="none" stroke="#9a9a9a" stroke-width="0.9"><rect x="0.5" y="0.5" width="14" height="14" fill="#fafafa"/><path d="M7.5 0.5 V14.5"/><rect x="2.5" y="2.5" width="3" height="2.5"/><rect x="2.5" y="6.5" width="3" height="2.5"/><rect x="2.5" y="10.5" width="3" height="2.5"/><rect x="9.5" y="2.5" width="3" height="2.5"/><rect x="9.5" y="6.5" width="3" height="2.5"/><rect x="9.5" y="10.5" width="3" height="2.5"/></g></svg><div class="t" style="left:61.5px;width:200px;text-align:center;top:56.54px;font-size:6.6px;color:#444;font-weight:normal;">Handout</div><div class="t" style="left:61.5px;width:200px;text-align:center;top:65.24px;font-size:6.6px;color:#444;font-weight:normal;">Master</div><svg class="a" style="left:179px;top:38px;" width="14" height="15" viewBox="0 0 14 15"><g fill="none" stroke="#9a9a9a" stroke-width="0.9"><rect x="0.5" y="0.5" width="13" height="14" fill="#fafafa"/><rect x="2.5" y="2.5" width="9" height="4.5"/><rect x="2.5" y="8.5" width="9" height="4.5"/></g></svg><div class="t" style="left:86px;width:200px;text-align:center;top:56.54px;font-size:6.6px;color:#444;font-weight:normal;">Notes</div><div class="t" style="left:86px;width:200px;text-align:center;top:65.24px;font-size:6.6px;color:#444;font-weight:normal;">Master</div><div class="t" style="left:61.5px;width:200px;text-align:center;top:75.72px;font-size:6.3px;color:#555;font-weight:normal;">Master Views</div><svg class="a" style="left:205px;top:39px;" width="7" height="7" viewBox="0 0 7 7"><path d="M1 3.5 L3 5.5 L6.5 1.5" fill="none" stroke="#c4c4c4" stroke-width="0.9"/></svg><div class="t" style="left:213.5px;top:38.34px;font-size:6.6px;color:#a8a8a8;font-weight:normal;">Ruler</div><div class="a" style="left:205px;top:51px;width:6px;height:6px;background:#fff;border:0.5px solid #d0d0d0;box-sizing:border-box"></div><div class="t" style="left:213.5px;top:50.54px;font-size:6.6px;color:#a8a8a8;font-weight:normal;">Gridlines</div><div class="a" style="left:205px;top:63.5px;width:6px;height:6px;background:#fff;border:0.5px solid #d0d0d0;box-sizing:border-box"></div><div class="t" style="left:213.5px;top:63.04px;font-size:6.6px;color:#a8a8a8;font-weight:normal;">Guides</div><svg class="a" style="left:245px;top:38px;" width="17" height="16" viewBox="0 0 17 16"><g fill="none" stroke="#c6c6c6" stroke-width="0.9"><rect x="0.5" y="0.5" width="16" height="15" fill="#f7f7f7"/><path d="M6.5 0.5 V15.5"/><rect x="8.5" y="2.5" width="6" height="5"/><rect x="7" y="10" width="9.5" height="5.5" fill="#d4d4d4" stroke="none"/></g></svg><div class="t" style="left:153.5px;width:200px;text-align:center;top:56.54px;font-size:6.6px;color:#a8a8a8;font-weight:normal;">Notes</div><div class="t" style="left:129px;width:200px;text-align:center;top:75.72px;font-size:6.3px;color:#555;font-weight:normal;">Show</div><svg class="a" style="left:260px;top:76px;" width="5" height="5" viewBox="0 0 5 5"><path d="M0.5 0.5 H4.5 V4.5 M1.5 3.5 L4 1" fill="none" stroke="#aaa" stroke-width="0.7"/></svg><svg class="a" style="left:272.5px;top:38px;" width="16" height="16" viewBox="0 0 16 16"><circle cx="6.2" cy="6.2" r="5" fill="#fafafa" stroke="#707070" stroke-width="1.1"/><path d="M9.8 9.8 L14.8 14.8" stroke="#707070" stroke-width="1.8"/></svg><div class="t" style="left:180.5px;width:200px;text-align:center;top:56.54px;font-size:6.6px;color:#444;font-weight:normal;">Zoom</div><svg class="a" style="left:296px;top:38px;" width="16" height="15" viewBox="0 0 16 15"><g fill="none" stroke="#7a7a7a" stroke-width="0.9"><rect x="0.5" y="0.5" width="15" height="14" fill="#fafafa"/><rect x="4" y="4" width="8" height="7" stroke="#aaa" stroke-dasharray="1 1"/><path d="M8 1.5 V3 M8 12 V13.5 M1.5 7.5 H3 M13 7.5 H14.5" stroke="#7a7a9a"/></g></svg><div class="t" style="left:204px;width:200px;text-align:center;top:56.54px;font-size:6.6px;color:#444;font-weight:normal;">Fit to</div><div class="t" style="left:204px;width:200px;text-align:center;top:65.24px;font-size:6.6px;color:#444;font-weight:normal;">Window</div><div class="t" style="left:193px;width:200px;text-align:center;top:75.72px;font-size:6.3px;color:#555;font-weight:normal;">Zoom</div><div class="a" style="left:323px;top:36px;width:30px;height:11.5px;background:#cdcdcd"></div><svg class="a" style="left:325px;top:37.5px;" width="8" height="8" viewBox="0 0 8 8"><rect x="0" y="0" width="8" height="3.3" fill="#d0523a"/><rect x="0" y="3.3" width="8" height="1.6" fill="#5aa36a"/><rect x="0" y="4.9" width="8" height="3.1" fill="#4a86c8"/></svg><div class="t" style="left:335px;top:37.54px;font-size:6.6px;color:#444;font-weight:normal;">Color</div><svg class="a" style="left:325px;top:50px;" width="8" height="8" viewBox="0 0 8 8"><rect x="0" y="0" width="8" height="2.5" fill="#f0f0f0"/><rect x="0" y="2.5" width="8" height="2.5" fill="#999"/><rect x="0" y="5" width="8" height="3" fill="#111"/></svg><div class="t" style="left:335px;top:50.54px;font-size:6.6px;color:#444;font-weight:normal;">Grayscale</div><svg class="a" style="left:325px;top:63px;" width="8" height="8" viewBox="0 0 8 8"><rect x="0" y="0" width="8" height="4" fill="#fff" stroke="#ddd" stroke-width="0.5"/><rect x="0" y="4" width="8" height="4" fill="#000"/></svg><div class="t" style="left:335px;top:63.04px;font-size:6.6px;color:#444;font-weight:normal;">Black and White</div><div class="t" style="left:253px;width:200px;text-align:center;top:75.72px;font-size:6.3px;color:#555;font-weight:normal;">Color/Grayscale</div><svg class="a" style="left:393px;top:37px;" width="16" height="18" viewBox="0 0 16 18"><g stroke-width="0.8"><rect x="5.5" y="0.5" width="9.5" height="7" fill="#fafafa" stroke="#8a8a8a"/><rect x="5.5" y="0.5" width="9.5" height="1.5" fill="#6a6460"/><rect x="0.5" y="4.5" width="9" height="7" fill="#fafafa" stroke="#8a8a8a"/><rect x="0.5" y="4.5" width="9" height="1.5" fill="#6a6460"/><rect x="6" y="10.5" width="9.5" height="7" fill="#fafafa" stroke="#4a6890"/><rect x="6" y="10.5" width="9.5" height="1.8" fill="#4a6890"/></g></svg><div class="t" style="left:300.5px;width:200px;text-align:center;top:56.54px;font-size:6.6px;color:#444;font-weight:normal;">New</div><div class="t" style="left:300.5px;width:200px;text-align:center;top:65.24px;font-size:6.6px;color:#444;font-weight:normal;">Window</div><svg class="a" style="left:415.5px;top:37px;" width="10" height="34" viewBox="0 0 10 34"><g stroke-width="0.8" fill="#fafafa"><rect x="1" y="0.5" width="8" height="8" stroke="#4a6890"/><path d="M1 3 H9 M1 5.5 H9" stroke="#4a6890"/><rect x="0.5" y="12" width="6" height="4.5" stroke="#666"/><rect x="2" y="13.5" width="6" height="4.5" stroke="#666"/><rect x="3.5" y="15" width="6" height="4.5" stroke="#666"/><rect x="1" y="25" width="8" height="7" stroke="#bbb"/><path d="M1 27 H9" stroke="#bbb"/></g></svg><svg class="a" style="left:438.5px;top:38px;" width="17" height="14" viewBox="0 0 17 14"><g stroke-width="0.8"><rect x="0.5" y="0.5" width="7.5" height="6" fill="#fafafa" stroke="#8a8a8a"/><rect x="0.5" y="0.5" width="7.5" height="1.3" fill="#6a6460"/><rect x="9" y="0.5" width="7.5" height="6" fill="#fafafa" stroke="#8a8a8a"/><rect x="9" y="0.5" width="7.5" height="1.3" fill="#6a6460"/><rect x="0.5" y="7.5" width="7.5" height="6" fill="#fafafa" stroke="#8a8a8a"/><rect x="6" y="5" width="8" height="6.5" fill="#fafafa" stroke="#4a6890"/><rect x="6" y="5" width="8" height="1.5" fill="#4a6890"/></g></svg><div class="t" style="left:346.5px;width:200px;text-align:center;top:56.54px;font-size:6.6px;color:#444;font-weight:normal;">Switch</div><div class="t" style="left:344.5px;width:200px;text-align:center;top:65.24px;font-size:6.6px;color:#444;font-weight:normal;">Windows</div><svg class="a" style="left:459.5px;top:68px;" width="4" height="3" viewBox="0 0 4 3"><path d="M0 0 H4 L2 2.5 Z" fill="#666"/></svg><div class="t" style="left:326.5px;width:200px;text-align:center;top:75.72px;font-size:6.3px;color:#555;font-weight:normal;">Window</div><svg class="a" style="left:472px;top:38px;" width="18" height="16" viewBox="0 0 18 16"><g stroke-width="0.8"><rect x="0.5" y="0.5" width="14" height="11" fill="#fafafa" stroke="#777"/><rect x="0.5" y="0.5" width="14" height="1.8" fill="#777"/><path d="M2.5 5 H6 M7.5 5 H12 M2.5 7.5 H6 M7.5 7.5 H12 M2.5 10 H6" stroke="#999"/><path d="M9.5 9 H15 L16.5 10.5 V15.5 H9.5 Z" fill="#f5e6c8" stroke="#d09a3a"/><rect x="10" y="13" width="3" height="2" fill="#d09a3a"/></g></svg><div class="t" style="left:380.5px;width:200px;text-align:center;top:56.54px;font-size:6.6px;color:#444;font-weight:normal;">Macros</div><div class="t" style="left:380.5px;width:200px;text-align:center;top:75.72px;font-size:6.3px;color:#555;font-weight:normal;">Macros</div><svg class="a" style="left:500px;top:76px;" width="7" height="5" viewBox="0 0 7 5"><path d="M1 4 L3.5 1.5 L6 4" fill="none" stroke="#555" stroke-width="0.9"/></svg><svg class="a" style="left:0px;top:0px;pointer-events:none" width="512" height="110" viewBox="0 0 512 110"><path d="M7 91.3 L10.3 94.6 M10.3 91.3 L7 94.6" stroke="#555" stroke-width="1.1"/><rect x="21.2" y="89.6" width="6.8" height="7.4" fill="#f4eef8" stroke="#7b5aa6" stroke-width="1.2"/><rect x="21.2" y="93.8" width="6.8" height="1.2" fill="#b8a0d0"/><path d="M37 91.5 L39.5 89.5 M37 91.5 L39.5 93.5 M37.3 91.5 H41 C43 91.5 44 93 44 94.5 C44 96 43 97 41.5 97" fill="none" stroke="#3d6fb0" stroke-width="1.1"/><path d="M46.8 92.6 L49.2 92.6 L48 94.1 Z" fill="#666"/><path d="M60.5 90.3 A3.6 3.6 0 1 1 56 91.5" fill="none" stroke="#3d6fb0" stroke-width="1.3"/><path d="M59 89 L61.5 90.3 L59.8 92.5" fill="none" stroke="#3d6fb0" stroke-width="1"/><path d="M70 89.5 H79 M71 89.5 V95 H78 V89.5 M74.5 95 V97.5 M72.5 97.5 H76.5 M72.5 91.5 H76.5 M72.5 93 H75" fill="none" stroke="#666" stroke-width="0.8"/><path d="M86.5 89 H90.5 L93 91.5 V97.5 H86.5 Z M90.5 89 V91.5 H93" fill="#fff" stroke="#777" stroke-width="0.8"/><path d="M100.5 96.5 L102 92.5 H109.5 L108 96.5 Z" fill="#f2cf7a"/><path d="M100.5 96.5 V91.5 H103.5 L104.3 92.5" fill="#e8b860"/><path d="M119.5 89 L117.5 97 M123 89 L121 97 M116.5 91.3 H124 M115.8 94.6 H123.2" stroke="#8e8e8e" stroke-width="0.8"/><path d="M131.5 97 V93 L134 91.5 L136.5 93 V97 M134 97 V94.5 M137 97 V95 H140 V97" fill="none" stroke="#c0c0c0" stroke-width="0.8"/><circle cx="149.5" cy="93.5" r="3.8" fill="none" stroke="#c8c8c8" stroke-width="0.9"/><path d="M149.5 93.5 L153 91 M149.5 93.5 V89.5" stroke="#c8c8c8" stroke-width="0.8"/><path d="M157.3 92.8 L159.7 92.8 L158.5 94.3 Z" fill="#d0d0d0"/><rect x="165.3" y="89.3" width="8" height="8" fill="#c4c4c4"/><path d="M167.3 91.3 L171.3 95.3 M171.3 91.3 L167.3 95.3" stroke="#f0f0f0" stroke-width="1.1"/><rect x="184.3" y="92" width="1.2" height="1.2" fill="#333"/><rect x="184.3" y="94.5" width="1.2" height="1.2" fill="#333"/></svg><div class="a" style="left:0px;top:542px;width:512px;height:12px;background:#f3f3f3;border-top:1px solid #d6d6d6;box-sizing:border-box"></div><div class="t" style="left:5px;top:544.52px;font-size:6.3px;color:#666;font-weight:normal;-webkit-text-stroke:0">Slide 4 of 4</div><svg class="a" style="left:45px;top:544px;" width="9" height="9" viewBox="0 0 9 9"><path d="M1 1.5 H4.5 V8 H1 Z M4.5 1.5 H8 V8 H4.5" fill="none" stroke="#777" stroke-width="0.8"/><path d="M5 5 L6 6.5 L8.5 2.5" fill="none" stroke="#777" stroke-width="0.8"/></svg><div class="t" style="left:62.5px;top:544.52px;font-size:6.3px;color:#666;font-weight:normal;-webkit-text-stroke:0">English (United Kingdom)</div><svg class="a" style="left:321.5px;top:544px;" width="10" height="9" viewBox="0 0 10 9"><rect x="1" y="1" width="7.5" height="7" fill="none" stroke="#777" stroke-width="0.8"/><path d="M3.5 1 V8 M5 3.5 H7.5" stroke="#777" stroke-width="0.8"/></svg><div class="a" style="left:337px;top:543px;width:19.5px;height:11px;background:#d4d4d4"></div><svg class="a" style="left:342.5px;top:544.5px;" width="9" height="9" viewBox="0 0 9 9"><g fill="none" stroke="#777" stroke-width="0.8"><rect x="0.5" y="0.5" width="3" height="3"/><rect x="5" y="0.5" width="3" height="3"/><rect x="0.5" y="5" width="3" height="3"/><rect x="5" y="5" width="3" height="3"/></g></svg><svg class="a" style="left:362px;top:544px;" width="9" height="9" viewBox="0 0 9 9"><path d="M0.8 1 H4.5 V8 H0.8 Z M4.5 1 H8.2 V8 H4.5 Z" fill="none" stroke="#777" stroke-width="0.8"/></svg><svg class="a" style="left:383px;top:544px;" width="8" height="9" viewBox="0 0 8 9"><path d="M0.5 1 H7.5 M1.2 1 V5.5 H6.8 V1 M4 5.5 V8 M2.5 8 H5.5" fill="none" stroke="#777" stroke-width="0.8"/></svg><div class="a" style="left:400.5px;top:548px;width:3px;height:1px;background:#555"></div><div class="a" style="left:404px;top:548px;width:57.5px;height:1px;background:#c4c4c4"></div><div class="a" style="left:430.5px;top:545px;width:2px;height:7px;background:#555"></div><svg class="a" style="left:461px;top:545px;" width="7" height="7" viewBox="0 0 7 7"><path d="M3.5 1.3 V5.7 M1.3 3.5 H5.7" stroke="#555" stroke-width="1"/></svg><div class="t" style="left:474px;top:544.64px;font-size:6.1px;color:#666;font-weight:normal;-webkit-text-stroke:0">100%</div><svg class="a" style="left:494px;top:544px;" width="9" height="9" viewBox="0 0 9 9"><rect x="0.8" y="0.8" width="7.4" height="7.4" fill="none" stroke="#777" stroke-width="0.8"/><path d="M1 1 L3 3 M8 1 L6 3 M1 8 L3 6 M8 8 L6 6" stroke="#777" stroke-width="0.9"/></svg><div class="a s" style="left:15.5px;top:113.5px;width:170.5px;height:96.5px;background:radial-gradient(ellipse 62% 70% at 50% 55%, #5c4660 0%, #46394f 50%, #302b3b 100%);overflow:hidden"><div class="t" style="left:-14.5px;width:200px;text-align:center;top:36.30px;font-size:10.5px;color:#dcd4e0;font-weight:normal;transform:scaleX(1.136)">A different presentation</div><div class="t" style="left:-14.75px;width:200px;text-align:center;top:51.28px;font-size:4.2px;color:#f4eef4;font-weight:bold;">By someone else</div><svg class="a" style="left:146.5px;top:76px" width="18" height="18" viewBox="-1 -1 18 18"><defs><radialGradient id="gl" cx="0.45" cy="0.45" r="0.55"><stop offset="0.6" stop-color="#1c1ee0"/><stop offset="1" stop-color="#0a0a50"/></radialGradient></defs><circle cx="8" cy="8" r="8.6" fill="url(#gl)"/><path d="M8.3 1.2 C10.5 1 13.5 2.5 14.8 4.5 C15.8 7 15.5 10 14 12.5 C13 13.5 12.3 12.5 12.5 11 C12.8 9.5 11.5 9 10 9.2 C8.5 9.3 7.8 8 8.6 6.8 C9.5 5.5 8.5 4.5 8 3.5 C7.6 2.6 7.8 1.6 8.3 1.2 Z" fill="#2ee040"/><path d="M1.5 9 C2.5 9.5 3.5 10.5 4 12 C4.2 13.5 3.5 14 2.5 13 C1.6 12 1.2 10.5 1.5 9 Z" fill="#1a9a30"/></svg></div><div class="t" style="left:16px;top:213.64px;font-size:6.6px;color:#606060;font-weight:normal;">1</div><div class="a s" style="left:206px;top:113.5px;width:170.5px;height:96.5px;background:radial-gradient(ellipse 62% 70% at 50% 55%, #5c4660 0%, #46394f 50%, #302b3b 100%);overflow:hidden"><div class="t" style="left:29px;top:4.32px;font-size:8.3px;color:#f0e8f0;font-weight:bold;">Agenda</div><svg class="a" style="left:28.3px;top:23.8px" width="55.2" height="62" viewBox="0 0 55.2 62"><rect width="55.2" height="62" fill="#b4b09a"/><rect x="0" y="0" width="55.2" height="26" fill="#9ea08a"/><path d="M0 2 C6 -1 14 1 20 4 C16 8 12 12 8 14 C4 12 1 8 0 2 Z" fill="#5a8a3a"/><path d="M4 3 C8 6 10 10 9 13" stroke="#c8d870" stroke-width="1.2" fill="none"/><path d="M14 4 C16 7 15 10 13 12" stroke="#a8c860" stroke-width="1" fill="none"/><path d="M2 12 H13 L11 23 H4 Z" fill="#c0704e"/><path d="M19 12 C22 10 26 11 28 14 L29 33 H20 Z" fill="#505868"/><path d="M25 17 C28 14 38 14 42 18 L43 33 H26 Z" fill="#9a72c2"/><path d="M28 19 L31 30" stroke="#d8c0e8" stroke-width="1.2"/><circle cx="35" cy="10.5" r="4.3" fill="#e4a47a"/><path d="M30.5 10 C30 5 39 4 39.5 9 C38 7 33 7 30.5 10 Z" fill="#b0603a"/><path d="M41 16 C45 13 52 13 55.2 16 V31 H42 Z" fill="#b8d8c8"/><circle cx="50" cy="11" r="3.8" fill="#d0906a"/><path d="M46 8 C48 5 53 6 54 9" fill="#7a4a2a"/><path d="M12 33 L55.2 26 V50 L18 56 Z" fill="#6e5c3a"/><rect x="32" y="28" width="8.5" height="12" fill="#eceae2"/><path d="M34 33 L36 36 L39 31" stroke="#b0b0c0" stroke-width="0.6" fill="none"/><path d="M0 40 C4 36 14 35 22 38 L26 44 L22 62 H0 Z" fill="#a4bcd4"/><path d="M10 40 L11 54" stroke="#3a3a4a" stroke-width="1.2"/><circle cx="13" cy="33" r="4.2" fill="#e2a682"/><path d="M8.5 32 C8 27 17 26 18 31 C15 29 11 29 8.5 32 Z" fill="#3a3020"/><path d="M12 48 C20 44 28 46 34 50 C30 54 20 56 12 54 Z" fill="#5a4a30"/><path d="M34 54 C38 50 50 50 55.2 53 V62 H33 Z" fill="#6a8ac8"/><circle cx="46" cy="46" r="5.2" fill="#2e2a22"/><rect x="0.4" y="0.4" width="54.4" height="61.2" fill="none" stroke="#d8d2c4" stroke-width="0.8"/></svg><div class="a" style="left:92px;top:26.6px;width:1.6px;height:1.0px;background:#c8a8c8"></div><div class="t" style="left:96.6px;top:23.88px;font-size:5.2px;color:#f0e8f0;font-weight:normal;-webkit-text-stroke:0.15px #f0e8f0">Highlights</div><div class="a" style="left:92px;top:34.1px;width:1.6px;height:1.0px;background:#c8a8c8"></div><div class="t" style="left:96.6px;top:31.38px;font-size:5.2px;color:#f0e8f0;font-weight:normal;-webkit-text-stroke:0.15px #f0e8f0">Income</div><div class="a" style="left:92px;top:41.1px;width:1.6px;height:1.0px;background:#c8a8c8"></div><div class="t" style="left:96.6px;top:38.38px;font-size:5.2px;color:#f0e8f0;font-weight:normal;-webkit-text-stroke:0.15px #f0e8f0">Revenue by</div><div class="a" style="left:92px;top:54.0px;width:1.6px;height:1.0px;background:#c8a8c8"></div><div class="t" style="left:96.6px;top:51.28px;font-size:5.2px;color:#f0e8f0;font-weight:normal;-webkit-text-stroke:0.15px #f0e8f0">Assets</div><div class="t" style="left:96.6px;top:43.68px;font-size:5.2px;color:#f0e8f0;font-weight:normal;-webkit-text-stroke:0.15px #f0e8f0">Division</div><svg class="a" style="left:146.5px;top:76px" width="18" height="18" viewBox="-1 -1 18 18"><defs><radialGradient id="gl" cx="0.45" cy="0.45" r="0.55"><stop offset="0.6" stop-color="#1c1ee0"/><stop offset="1" stop-color="#0a0a50"/></radialGradient></defs><circle cx="8" cy="8" r="8.6" fill="url(#gl)"/><path d="M8.3 1.2 C10.5 1 13.5 2.5 14.8 4.5 C15.8 7 15.5 10 14 12.5 C13 13.5 12.3 12.5 12.5 11 C12.8 9.5 11.5 9 10 9.2 C8.5 9.3 7.8 8 8.6 6.8 C9.5 5.5 8.5 4.5 8 3.5 C7.6 2.6 7.8 1.6 8.3 1.2 Z" fill="#2ee040"/><path d="M1.5 9 C2.5 9.5 3.5 10.5 4 12 C4.2 13.5 3.5 14 2.5 13 C1.6 12 1.2 10.5 1.5 9 Z" fill="#1a9a30"/></svg></div><div class="t" style="left:206px;top:213.64px;font-size:6.6px;color:#606060;font-weight:normal;">2</div><div class="a s" style="left:15.5px;top:237.5px;width:170.5px;height:96.5px;background:radial-gradient(ellipse 62% 70% at 50% 55%, #5c4660 0%, #46394f 50%, #302b3b 100%);overflow:hidden"><div class="t" style="left:12.5px;top:10.40px;font-size:8.5px;color:#e9e0ea;font-weight:normal;">Key Accomplishments</div><div class="a" style="left:13px;top:28.7px;width:1.2px;height:1.2px;background:#f0e8f0"></div><div class="t" style="left:17px;top:26.57px;font-size:4.55px;color:#f4eef4;font-weight:normal;font-family:"Liberation Serif",serif;-webkit-text-stroke:0.12px #f4eef4">Sales up in 3rd Qtr.</div><div class="a" style="left:13px;top:34.73px;width:1.2px;height:1.2px;background:#f0e8f0"></div><div class="t" style="left:17px;top:32.60px;font-size:4.55px;color:#f4eef4;font-weight:normal;font-family:"Liberation Serif",serif;-webkit-text-stroke:0.12px #f4eef4">Sales force trained in new</div><div class="t" style="left:17px;top:38.63px;font-size:4.55px;color:#f4eef4;font-weight:normal;font-family:"Liberation Serif",serif;-webkit-text-stroke:0.12px #f4eef4">product line</div><div class="a" style="left:13px;top:46.79px;width:1.2px;height:1.2px;background:#f0e8f0"></div><div class="t" style="left:17px;top:44.66px;font-size:4.55px;color:#f4eef4;font-weight:normal;font-family:"Liberation Serif",serif;-webkit-text-stroke:0.12px #f4eef4">Travel, food, and entertainment</div><div class="t" style="left:17px;top:50.69px;font-size:4.55px;color:#f4eef4;font-weight:normal;font-family:"Liberation Serif",serif;-webkit-text-stroke:0.12px #f4eef4">costs down by 12%</div><div class="a" style="left:13px;top:58.85px;width:1.2px;height:1.2px;background:#f0e8f0"></div><div class="t" style="left:17px;top:56.72px;font-size:4.55px;color:#f4eef4;font-weight:normal;font-family:"Liberation Serif",serif;-webkit-text-stroke:0.12px #f4eef4">Market share up to 37%</div><div class="a" style="left:13px;top:64.88000000000001px;width:1.2px;height:1.2px;background:#f0e8f0"></div><div class="t" style="left:17px;top:62.75px;font-size:4.55px;color:#f4eef4;font-weight:normal;font-family:"Liberation Serif",serif;-webkit-text-stroke:0.12px #f4eef4">New partnership with</div><div class="t" style="left:17px;top:68.78px;font-size:4.55px;color:#f4eef4;font-weight:normal;font-family:"Liberation Serif",serif;-webkit-text-stroke:0.12px #f4eef4">International Widget</div><svg class="a" style="left:87px;top:23.5px" width="56" height="63" viewBox="0 0 56 63"><rect x="0.8" y="10.8" width="52" height="50.5" fill="#78c4f2" stroke="#101030" stroke-width="1.4"/><g fill="none" stroke="#6a5ad0" stroke-width="0.9"><path d="M1 18 C5 16 8 20 12 17 C16 14 19 18 23 15 C27 12 31 16 35 13 C39 11 44 15 52 13"/><path d="M1 27 C6 25 9 29 14 26 C18 23 22 28 26 25"/><path d="M40 26 C44 24 48 28 52 25"/><path d="M1 38 C5 36 9 40 13 37 C16 35 19 38 22 36"/><path d="M43 38 C46 36 49 40 52 37"/><path d="M1 50 C4 48 7 51 10 49"/><path d="M8 11 C10 16 7 21 9 27 C11 33 8 38 10 44"/><path d="M18 11 C20 17 16 23 19 30 C21 35 18 40 20 45"/><path d="M46 11 C44 18 48 24 45 31 C43 37 47 42 45 50"/></g><circle cx="5" cy="16" r="1.4" fill="#5a3aa8"/><circle cx="6" cy="28" r="1.3" fill="#5a3aa8"/><circle cx="13" cy="36" r="1.2" fill="#5a3aa8"/><circle cx="46" cy="26" r="1.3" fill="#5a3aa8"/><path d="M17 40.7 C14 34 19 26 25 23 C31 20 36 21 40 20 C38 24 33 25 31 29 C29 33 31 37 27 40.5 Z" fill="#ea2a22" stroke="#5a0a0a" stroke-width="0.7"/><path d="M0.8 61.3 L10 43.6 L17.5 61.3 Z" fill="#6ac46a" stroke="#0a2a0a" stroke-width="0.7"/><path d="M0.8 61.3 C10 52 24 40 38.4 34.8 L40.5 61.3 Z" fill="#66c266" stroke="#0a2a0a" stroke-width="0.8"/><path d="M6 61 C14 52 24 45 34 40" fill="none" stroke="#a8e0a0" stroke-width="1.2"/><path d="M38.4 34.8 L45 46 L52.8 61.3 H40.5 Z" fill="#e01414" stroke="#3a0a0a" stroke-width="0.7"/><path d="M44 61.3 L48 47 L52.8 61.3 Z" fill="#7acc7a" stroke="#0a2a0a" stroke-width="0.6"/><path d="M28.3 6.5 C31 3 36 1 41 0.8 L41.5 5.5 C37 5.5 32 6 28.3 6.5 Z" fill="#f0e088" stroke="#4a4a0a" stroke-width="0.5"/><path d="M41 1 V36" stroke="#2a2a3a" stroke-width="0.9"/><circle cx="19.5" cy="9.4" r="1.6" fill="#f4d848"/><circle cx="53" cy="37" r="1.8" fill="#f4d848"/></svg><svg class="a" style="left:146.5px;top:76px" width="18" height="18" viewBox="-1 -1 18 18"><defs><radialGradient id="gl" cx="0.45" cy="0.45" r="0.55"><stop offset="0.6" stop-color="#1c1ee0"/><stop offset="1" stop-color="#0a0a50"/></radialGradient></defs><circle cx="8" cy="8" r="8.6" fill="url(#gl)"/><path d="M8.3 1.2 C10.5 1 13.5 2.5 14.8 4.5 C15.8 7 15.5 10 14 12.5 C13 13.5 12.3 12.5 12.5 11 C12.8 9.5 11.5 9 10 9.2 C8.5 9.3 7.8 8 8.6 6.8 C9.5 5.5 8.5 4.5 8 3.5 C7.6 2.6 7.8 1.6 8.3 1.2 Z" fill="#2ee040"/><path d="M1.5 9 C2.5 9.5 3.5 10.5 4 12 C4.2 13.5 3.5 14 2.5 13 C1.6 12 1.2 10.5 1.5 9 Z" fill="#1a9a30"/></svg></div><div class="t" style="left:16px;top:337.64px;font-size:6.6px;color:#606060;font-weight:normal;">3</div><div class="a" style="left:203.5px;top:235.8px;width:175.5px;height:100.7px;border:1px solid #b46048;box-sizing:border-box;background:#eea08a"></div><div class="a s" style="left:206px;top:237.5px;width:170.5px;height:96.5px;background:radial-gradient(ellipse 62% 70% at 50% 55%, #5c4660 0%, #46394f 50%, #302b3b 100%);overflow:hidden"><div class="a" style="left:0;top:0;width:100%;height:100%;background:rgba(232,232,242,0.40)"></div><div class="t" style="left:13px;top:6.08px;font-size:8.2px;color:#e8e2ea;font-weight:normal;">National Revenue By Division</div><svg class="a" style="left:57px;top:35px" width="72" height="50" viewBox="0 0 72 50"><text x="20" y="3" font-size="2.2" fill="#b0a8b8" font-family="Liberation Sans">Revenue per division</text><g transform="translate(21,22)" stroke="#6a6080" stroke-width="0.5"><path d="M0 0 L0 -19 A19 19 0 0 1 5.5 18.2 Z" fill="#c6c4f2"/><path d="M0 0 L5.5 18.2 A19 19 0 0 1 -14 12.8 Z" fill="#b67a9c"/><path d="M0 0 L-14 12.8 A19 19 0 0 1 -15 -11.6 Z" fill="#f6f2c8"/><path d="M0 0 L-15 -11.6 A19 19 0 0 1 0 -19 Z" fill="#d8f0f4"/></g><rect x="56" y="18" width="12.5" height="12" fill="#f4f4f4"/><g fill="#888"><rect x="57" y="20" width="10" height="0.7"/><rect x="57" y="23" width="10" height="0.7"/><rect x="57" y="26" width="10" height="0.7"/></g></svg><div class="a" style="left:0;top:0;opacity:0.62"><svg class="a" style="left:146.5px;top:76px" width="18" height="18" viewBox="-1 -1 18 18"><defs><radialGradient id="gl" cx="0.45" cy="0.45" r="0.55"><stop offset="0.6" stop-color="#1c1ee0"/><stop offset="1" stop-color="#0a0a50"/></radialGradient></defs><circle cx="8" cy="8" r="8.6" fill="url(#gl)"/><path d="M8.3 1.2 C10.5 1 13.5 2.5 14.8 4.5 C15.8 7 15.5 10 14 12.5 C13 13.5 12.3 12.5 12.5 11 C12.8 9.5 11.5 9 10 9.2 C8.5 9.3 7.8 8 8.6 6.8 C9.5 5.5 8.5 4.5 8 3.5 C7.6 2.6 7.8 1.6 8.3 1.2 Z" fill="#2ee040"/><path d="M1.5 9 C2.5 9.5 3.5 10.5 4 12 C4.2 13.5 3.5 14 2.5 13 C1.6 12 1.2 10.5 1.5 9 Z" fill="#1a9a30"/></svg></div></div><svg class="a" style="left:203px;top:337px;" width="8" height="8" viewBox="0 0 8 8"><path d="M1.5 1 L6.5 7 M2.5 3.5 L5 1 M1 6 L4 5" stroke="#c0503a" stroke-width="0.9" fill="none"/></svg><svg class="a" style="left:370px;top:338px;" width="7" height="7" viewBox="0 0 7 7"><path d="M3.5 0.5 L4.3 2.7 L6.6 2.7 L4.8 4.1 L5.4 6.5 L3.5 5.1 L1.6 6.5 L2.2 4.1 L0.4 2.7 L2.7 2.7 Z" fill="#555"/></svg></div>
<div class="a" style="left:0;top:34px;width:1px;height:508px;background:#cdb3aa"></div>
<div class="a" style="left:511px;top:34px;width:1px;height:520px;background:#e8cfc8"></div>
<div class="a" style="left:512px;top:0;width:1px;height:34px;background:#8a3422"></div><div class="a" style="left:512px;top:34px;width:1px;height:520px;background:#6e6e6e"></div>
<div class="a" style="left:513px;top:0;width:511px;height:1px;background:#c96a50"></div>
<div class="a" style="left:0;top:0;width:1024px;height:576px;will-change:transform"><div class="a" style="left:0px;top:554px;width:1024px;height:22px;background:#4a0c2a"></div><div class="a" style="left:0px;top:554px;width:25px;height:22px;background:#480b29"></div><svg class="a" style="left:8px;top:560.5px;" width="9.5" height="9.5" viewBox="0 0 9.5 9.5"><g fill="#f4e8f0"><path d="M0 1.3 L4.1 0.7 V4.4 H0 Z"/><path d="M4.8 0.6 L9.5 0 V4.4 H4.8 Z"/><path d="M0 5.1 H4.1 V8.8 L0 8.2 Z"/><path d="M4.8 5.1 H9.5 V9.5 L4.8 8.9 Z"/></g></svg><div class="a" style="left:25px;top:554px;width:184px;height:22px;background:#6d3460"></div><svg class="a" style="left:30px;top:559px;" width="13" height="13" viewBox="0 0 13 13"><circle cx="6.5" cy="6.5" r="5.2" fill="none" stroke="#f4e4ee" stroke-width="1.4"/></svg><div class="t" style="left:45px;top:560.74px;font-size:7.6px;color:#cfaec4;font-weight:normal;">Ask me anything</div><svg class="a" style="left:195px;top:559px;" width="8" height="12" viewBox="0 0 8 12"><path d="M2.5 1 H5.5 V6.5 C5.5 8 2.5 8 2.5 6.5 Z M1 5.5 C1 9 7 9 7 5.5 M4 8.5 V11 M2 11 H6" fill="none" stroke="#c8a0b8" stroke-width="0.8"/></svg><svg class="a" style="left:215px;top:559px;" width="14" height="11" viewBox="0 0 14 11"><path d="M3.5 1 H10.5 V10 H3.5 Z M1 2.5 H3.5 M1 2.5 V8.5 H3.5 M13 2.5 H10.5 M13 2.5 V8.5 H10.5" fill="none" stroke="#f0dce8" stroke-width="0.9"/></svg><svg class="a" style="left:243px;top:558px;" width="13" height="13" viewBox="0 0 13 13"><path d="M12 7.5 H3 C3.5 10.5 7.5 11.5 11 9.8 V12 C7 13.5 1 12.5 1 6.8 C1 2.5 4 0.5 7 0.5 C10.5 0.5 12.5 3 12 7.5 Z M3.2 5.5 H9.5 C9.3 3.5 8 2.6 6.5 2.6 C5 2.6 3.6 3.6 3.2 5.5 Z" fill="#1e7ad8"/></svg><svg class="a" style="left:268.5px;top:558px;" width="13" height="13" viewBox="0 0 13 13"><rect x="0.5" y="2" width="12" height="10" fill="#f4d36a"/><rect x="0.5" y="1" width="5" height="2" fill="#e8c050"/><rect x="0.5" y="7" width="12" height="5" fill="#8ac4e8"/><rect x="5" y="9.5" width="3" height="1.5" fill="#3a7ab0"/></svg><svg class="a" style="left:295px;top:557.5px;" width="12" height="14" viewBox="0 0 12 14"><path d="M0.5 3.5 H11.5 V13.5 H0.5 Z" fill="#f4f4f4"/><path d="M3.5 3.5 V1.8 C3.5 0.5 8.5 0.5 8.5 1.8 V3.5" fill="none" stroke="#f4f4f4" stroke-width="0.9"/><g fill="#4a0c2a"><rect x="3" y="6" width="2.6" height="2.6"/><rect x="6.4" y="6" width="2.6" height="2.6"/><rect x="3" y="9.4" width="2.6" height="2.6"/><rect x="6.4" y="9.4" width="2.6" height="2.6"/></g></svg><div class="a" style="left:315px;top:554px;width:24px;height:22px;background:#6e1456"></div><div class="a" style="left:315px;top:574.5px;width:24px;height:1.5px;background:#f0a8d0"></div><svg class="a" style="left:320.5px;top:559.5px;" width="14" height="12" viewBox="0 0 14 12"><rect x="6" y="1" width="7.5" height="10" fill="#f4e4e0"/><rect x="0" y="0" width="8.5" height="12" fill="#d04a28"/><text x="4.25" y="9" font-size="8" font-weight="bold" fill="#fff" text-anchor="middle" font-family="Liberation Sans">P</text><rect x="9.5" y="3" width="3" height="6" fill="#e6a090"/></svg><svg class="a" style="left:346.5px;top:559.5px;" width="14" height="12" viewBox="0 0 14 12"><rect x="6" y="1" width="7.5" height="10" fill="#e0d0ee"/><rect x="0" y="0" width="8.5" height="12" fill="#8a4ab8"/><text x="4.25" y="9" font-size="8" font-weight="bold" fill="#fff" text-anchor="middle" font-family="Liberation Sans">N</text><rect x="9.5" y="3" width="3" height="6" fill="#b890d8"/></svg><svg class="a" style="left:372.5px;top:559px;" width="14" height="12" viewBox="0 0 14 12"><g transform="rotate(-15 7 6)"><rect x="1" y="1" width="7" height="10" fill="#f4f4f4" stroke="#4a0c2a" stroke-width="0.5"/></g><g transform="rotate(12 7 6)"><rect x="5.5" y="1" width="7" height="10" fill="#fafafa" stroke="#4a0c2a" stroke-width="0.5"/></g><path d="M9 4 L11 7 H7 Z" fill="#222"/></svg><svg class="a" style="left:399.5px;top:558px;" width="13" height="13" viewBox="0 0 13 13"><circle cx="5" cy="4" r="3" fill="#e8a0a8"/><circle cx="6" cy="7" r="3" fill="#c0c0d8"/><path d="M3 9 L9 13 M7 8 L12 11 M4 6 L11 9" stroke="#6a8ab8" stroke-width="1"/></svg><svg class="a" style="left:425.5px;top:558.5px;" width="12" height="12" viewBox="0 0 12 12"><rect x="0" y="0" width="12" height="12" fill="#b89a8a"/><rect x="1" y="1" width="10" height="10" fill="#e8c88a"/><path d="M4 2.5 L9 6 L4 9.5 Z" fill="#f4a01a"/></svg><svg class="a" style="left:452px;top:558.5px;" width="13" height="12" viewBox="0 0 13 12"><rect x="6" y="2" width="7" height="8" fill="#f4f4f4"/><rect x="0" y="0" width="8" height="12" fill="#1a70c8"/><text x="4" y="9" font-size="7.5" font-weight="bold" fill="#fff" text-anchor="middle" font-family="Liberation Sans">O</text><path d="M8 3 L10.5 5.5 L13 3" stroke="#1a70c8" fill="none" stroke-width="0.8"/></svg><div class="a" style="left:448.5px;top:574.5px;width:20px;height:1.5px;background:#e8b0d0"></div><svg class="a" style="left:477.5px;top:558.5px;" width="13" height="12" viewBox="0 0 13 12"><rect x="6" y="1" width="7" height="10" fill="#e8e8f4"/><rect x="0" y="0" width="8.5" height="12" fill="#2a5aa8"/><text x="4.25" y="9" font-size="7.5" font-weight="bold" fill="#fff" text-anchor="middle" font-family="Liberation Sans">W</text></svg><div class="a" style="left:474px;top:574.5px;width:20px;height:1.5px;background:#e8b0d0"></div><svg class="a" style="left:503.5px;top:558.5px;" width="13" height="12" viewBox="0 0 13 12"><rect x="6" y="1" width="7" height="10" fill="#dfeede"/><rect x="0" y="0" width="8.5" height="12" fill="#1e7a3a"/><text x="4.25" y="9" font-size="7.5" font-weight="bold" fill="#fff" text-anchor="middle" font-family="Liberation Sans">X</text><rect x="9" y="3" width="3" height="6" fill="#6aaa6a"/></svg><svg class="a" style="left:529.5px;top:557.5px;" width="14" height="14" viewBox="0 0 14 14"><path d="M13 8 H4 C4.5 10.5 8 11.5 11 10 V12.2 C7 13.8 1.5 12.5 1.5 7.3 C1.5 3 4.5 1 7.5 1 C11 1 13.5 3.5 13 8 Z M4.2 6 H10.3 C10 4 8.8 3.1 7.3 3.1 C5.8 3.1 4.5 4 4.2 6 Z" fill="#1e90e8"/><path d="M1 12 C0 9 4 3 13 1 C12 0 9 0 6 2" fill="none" stroke="#f4b820" stroke-width="1"/></svg><div class="a" style="left:526.5px;top:574.5px;width:20px;height:1.5px;background:#e8b0d0"></div><svg class="a" style="left:556px;top:558px;" width="13" height="13" viewBox="0 0 13 13"><circle cx="6.5" cy="6.5" r="6.2" fill="#1aa8e8"/><text x="6.5" y="10" font-size="9" font-weight="bold" fill="#fff" text-anchor="middle" font-family="Liberation Sans">S</text></svg><div class="a" style="left:552.5px;top:574.5px;width:20px;height:1.5px;background:#e8b0d0"></div><svg class="a" style="left:582px;top:558px;" width="13" height="13" viewBox="0 0 13 13"><circle cx="6.5" cy="6.5" r="6.2" fill="#f8f0f8"/><path d="M5 9 V3.5 L9 2.5 V8" fill="none" stroke="#d05aa8" stroke-width="1"/><circle cx="4.2" cy="9" r="1.3" fill="#d05aa8"/><circle cx="8.2" cy="8" r="1.3" fill="#d05aa8"/></svg><svg class="a" style="left:891px;top:562px;" width="8" height="5" viewBox="0 0 8 5"><path d="M0.8 4.2 L4 1 L7.2 4.2" fill="none" stroke="#f0dce8" stroke-width="0.9"/></svg><svg class="a" style="left:902.5px;top:560px;" width="9" height="10" viewBox="0 0 9 10"><path d="M1 5 C1 1 5 0 8.5 1 C9 5 7 9 3 9 Z" fill="#9acd3a"/></svg><svg class="a" style="left:916.5px;top:560px;" width="9" height="10" viewBox="0 0 9 10"><path d="M1 9 C3 4 6 2 8.5 1.5 M3.5 9 C4.5 6 6.5 4.5 8.5 4 M6 9 C6.5 7.5 7.5 7 8.5 6.8" fill="none" stroke="#f0dce8" stroke-width="0.9"/></svg><svg class="a" style="left:928px;top:560px;" width="9" height="10" viewBox="0 0 9 10"><path d="M0.8 3.5 H2.8 L5 1 V9 L2.8 6.5 H0.8 Z" fill="none" stroke="#f0dce8" stroke-width="0.8"/><path d="M6.5 3.5 C7.3 4.5 7.3 5.5 6.5 6.5 M7.8 2.5 C9 4 9 6 7.8 7.5" fill="none" stroke="#f0dce8" stroke-width="0.7"/></svg><div class="t" style="left:942px;top:561.52px;font-size:6.3px;color:#f4e4ee;font-weight:normal;">ENG</div><div class="t" style="left:877px;width:200px;text-align:center;top:556.82px;font-size:6.3px;color:#f4e4ee;font-weight:normal;">11:28</div><div class="t" style="left:877px;width:200px;text-align:center;top:565.82px;font-size:6.3px;color:#f4e4ee;font-weight:normal;">03/02/2017</div><svg class="a" style="left:1001px;top:559px;" width="15" height="14" viewBox="0 0 15 14"><path d="M0.5 0.5 H11 V8 H5 L2.5 10 V8 H0.5 Z" fill="#f4eef2"/><path d="M2.5 3 H9 M2.5 5 H9" stroke="#4a0c2a" stroke-width="0.8"/><circle cx="10" cy="9.5" r="3.6" fill="#b02a7a" stroke="#f4e4ee" stroke-width="0.6"/><text x="10" y="11.6" font-size="5.2" fill="#fff" text-anchor="middle" font-family="Liberation Sans">2</text></svg></div>
</body></html>
